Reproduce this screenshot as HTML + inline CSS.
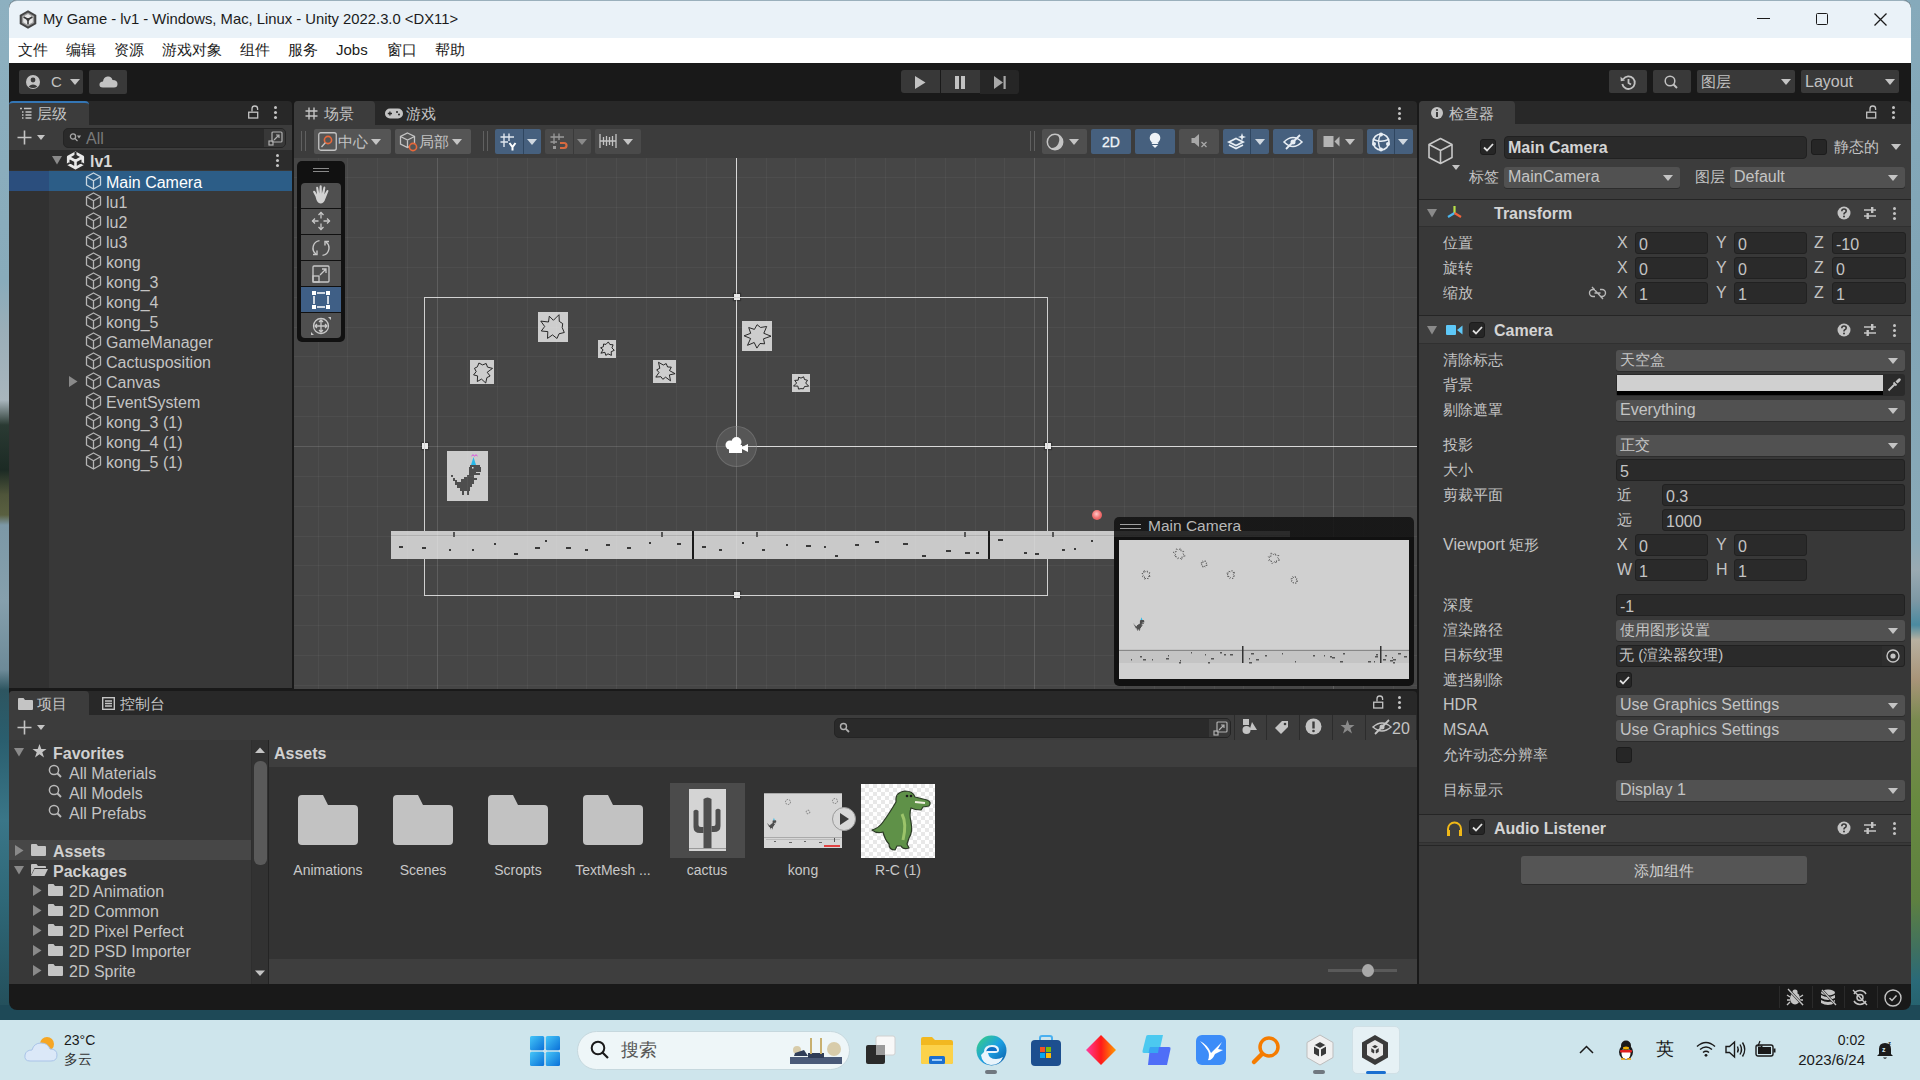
<!DOCTYPE html>
<html><head><meta charset="utf-8">
<style>
*{margin:0;padding:0;box-sizing:border-box}
html,body{width:1920px;height:1080px;overflow:hidden}
body{position:relative;font-family:"Liberation Sans",sans-serif;font-size:15px;color:#c4c4c4;
background:#1e4957}
.a{position:absolute}
.t{position:absolute;white-space:nowrap;line-height:20px}
svg{position:absolute;overflow:visible}
.btn{position:absolute;background:#383838;border-radius:2px}
.fld{position:absolute;background:#2a2a2a;border:1px solid #212121;border-radius:3px}
.dd{position:absolute;background:#515151;border-radius:3px;box-shadow:0 1px 0 #2c2c2c}
.tri{position:absolute;width:0;height:0;border-left:5px solid transparent;border-right:5px solid transparent;border-top:6px solid #c4c4c4}
.ico{position:absolute}
</style></head><body>
<!-- wallpaper right side -->
<div class="a" style="left:0;top:0;width:20px;height:1020px;background:linear-gradient(180deg,#8db0c0 0px,#88abbb 280px,#9aaeb8 330px,#a9b6bd 400px,#2a3a33 425px,#1c2a24 470px,#4f553a 495px,#5a6040 515px,#7c98a6 525px,#86a0ad 600px,#6d8a98 670px,#2d5560 690px,#2a5e6e 740px,#3a7688 820px,#2f6878 900px,#24505c 1005px,#1e4957 1020px)"></div><div class="a" style="left:1900px;top:0;width:20px;height:1020px;background:linear-gradient(180deg,#86aabb 0px,#80a4b5 300px,#8aaab8 540px,#9aaab2 570px,#7e98a4 600px,#4a8aa0 625px,#b8b0a0 640px,#a89478 680px,#7a8a50 720px,#688a40 800px,#5e8040 900px,#3f7060 950px,#2a6a78 980px,#245e6a 1020px)"></div>
<div class="a" style="left:0;top:1005px;width:1920px;height:15px;background:#1e4957"></div>

<!-- window base -->
<div class="a" style="left:9px;top:0;width:1902px;height:1010px;background:#191919;border-radius:8px"></div>
<!-- title bar -->
<div class="a" style="left:9px;top:0;width:1902px;height:38px;background:#eaf2f8;border-radius:8px 8px 0 0;border-top:1px solid #9ab0bc"></div>
<div class="t" style="left:43px;top:9px;font-size:14.8px;color:#1b1b1b">My Game - lv1 - Windows, Mac, Linux - Unity 2022.3.0 &lt;DX11&gt;</div>
<svg style="left:19px;top:10px" width="18" height="19" viewBox="0 0 18 19"><path d="M9 0.3 L17.3 5 V14 L9 18.7 L0.7 14 V5Z" fill="#444"/><path d="M9 2.5 L15.2 6.1 V12.9 L9 16.5 L2.8 12.9 V6.1Z" fill="#9a9a9a"/><path d="M9 4 L13.8 6.8 V12.2 L9 15 L4.2 12.2 V6.8Z" fill="#e8e8e8"/><path d="M9 9.5 V14.5 M9 9.5 L4.6 7 M9 9.5 L13.4 7" stroke="#3a3a3a" stroke-width="1.6"/><circle cx="9" cy="9.5" r="1.5" fill="#3a3a3a"/></svg>
<!-- window controls -->
<div class="a" style="left:1757px;top:18px;width:13px;height:1.3px;background:#1b1b1b"></div>
<div class="a" style="left:1816px;top:13px;width:12px;height:12px;border:1.3px solid #1b1b1b;border-radius:1.5px"></div>
<svg style="left:1874px;top:13px" width="13" height="13"><path d="M0.5 0.5 L12.5 12.5 M12.5 0.5 L0.5 12.5" stroke="#1b1b1b" stroke-width="1.3"/></svg>
<!-- menu bar -->
<div class="a" style="left:9px;top:38px;width:1902px;height:25px;background:#ffffff"></div>
<div class="t" style="left:18px;top:40px;font-size:15px;color:#1b1b1b">文件</div>
<div class="t" style="left:66px;top:40px;font-size:15px;color:#1b1b1b">编辑</div>
<div class="t" style="left:114px;top:40px;font-size:15px;color:#1b1b1b">资源</div>
<div class="t" style="left:162px;top:40px;font-size:15px;color:#1b1b1b">游戏对象</div>
<div class="t" style="left:240px;top:40px;font-size:15px;color:#1b1b1b">组件</div>
<div class="t" style="left:288px;top:40px;font-size:15px;color:#1b1b1b">服务</div>
<div class="t" style="left:336px;top:40px;font-size:15px;color:#1b1b1b">Jobs</div>
<div class="t" style="left:387px;top:40px;font-size:15px;color:#1b1b1b">窗口</div>
<div class="t" style="left:435px;top:40px;font-size:15px;color:#1b1b1b">帮助</div>
<!-- main toolbar -->
<div class="btn" style="left:19px;top:70px;width:64px;height:24px;background:#393939"></div>
<svg style="left:26px;top:75px" width="14" height="14"><circle cx="7" cy="7" r="7" fill="#c2c2c2"/><circle cx="7" cy="5" r="2.4" fill="#393939"/><path d="M2.6 11.4 Q7 7.5 11.4 11.4 Q7 14.5 2.6 11.4Z" fill="#393939"/></svg>
<div class="t" style="left:51px;top:72px;font-size:15px;color:#c2c2c2">C</div>
<div class="tri" style="left:70px;top:79px"></div>
<div class="btn" style="left:89px;top:70px;width:38px;height:24px;background:#393939"></div>
<svg style="left:99px;top:75px" width="19" height="13" viewBox="0 0 19 13"><path d="M4 12.5 Q0 12.5 0.5 9 Q1 6.5 4 6.5 Q4.5 2 8.5 1.5 Q12.5 1 13.5 5 Q18.5 5 18.5 9 Q18.5 12.5 15 12.5Z" fill="#c2c2c2"/></svg>
<div class="btn" style="left:901px;top:70px;width:39px;height:23px;background:#383838;border-radius:3px 0 0 3px"></div>
<div class="btn" style="left:941px;top:70px;width:39px;height:23px;background:#383838;border-radius:0"></div>
<div class="btn" style="left:980px;top:70px;width:39px;height:24px;background:#262626;border-radius:0 3px 3px 0"></div>
<svg style="left:915px;top:76px" width="11" height="13"><path d="M0 0 L10.5 6.5 L0 13Z" fill="#c2c2c2"/></svg>
<div class="a" style="left:955px;top:76px;width:4px;height:13px;background:#c2c2c2"></div>
<div class="a" style="left:961px;top:76px;width:4px;height:13px;background:#c2c2c2"></div>
<svg style="left:994px;top:76px" width="12" height="13"><path d="M0 0 L9 6.5 L0 13Z" fill="#a8a8a8"/><rect x="9.5" y="0" width="2.2" height="13" fill="#a8a8a8"/></svg>
<div class="btn" style="left:1609px;top:70px;width:38px;height:23px;background:#393939"></div>
<svg style="left:1620px;top:75px" width="16" height="15" viewBox="0 0 16 15"><path d="M3.2 4.2 A6.3 6.3 0 1 1 2.3 9" fill="none" stroke="#c2c2c2" stroke-width="1.8"/><path d="M0.5 1.8 L0.8 6.2 L5 5.6Z" fill="#c2c2c2"/><path d="M8.5 4 V8 L11 9.5" fill="none" stroke="#c2c2c2" stroke-width="1.8"/></svg>
<div class="btn" style="left:1653px;top:70px;width:38px;height:23px;background:#393939"></div>
<svg style="left:1664px;top:75px" width="16" height="15"><circle cx="6" cy="6" r="4.8" fill="none" stroke="#c2c2c2" stroke-width="1.5"/><path d="M9.5 9.5 L13 13" stroke="#c2c2c2" stroke-width="2"/></svg>
<div class="btn" style="left:1697px;top:70px;width:98px;height:23px;background:#393939"></div>
<div class="t" style="left:1701px;top:72px;font-size:15px;color:#c2c2c2">图层</div>
<div class="tri" style="left:1781px;top:79px"></div>
<div class="btn" style="left:1801px;top:70px;width:98px;height:23px;background:#393939"></div>
<div class="t" style="left:1805px;top:72px;font-size:16px;color:#c2c2c2">Layout</div>
<div class="tri" style="left:1885px;top:79px"></div>

<!-- HIERARCHY -->
<div class="a" style="left:9px;top:101px;width:283px;height:24px;background:#282828;border-radius:4px 4px 0 0"></div>
<div class="a" style="left:9px;top:125px;width:283px;height:25px;background:#3c3c3c"></div>
<div class="a" style="left:9px;top:150px;width:283px;height:538px;background:#383838"></div>

<!-- hierarchy tab -->
<div class="a" style="left:9px;top:101px;width:80px;height:24px;background:#3c3c3c;border-radius:4px 4px 0 0;border-top:2px solid #3476b5"></div>
<svg style="left:19px;top:107px" width="13" height="12"><path d="M1 1.5 H3 M5 1.5 H12.5 M3 5 H4.5 M6.5 5 H12.5 M3 8 H4.5 M6.5 8 H12.5 M3 11 H4.5 M6.5 11 H12.5" stroke="#c4c4c4" stroke-width="1.4"/></svg>
<div class="t" style="left:37px;top:104px;font-size:15px">层级</div>
<svg style="left:248px;top:105px" width="12" height="14"><path d="M4 6.5 V3.8 A2.8 2.8 0 0 1 9.6 3.8 V5" fill="none" stroke="#c4c4c4" stroke-width="1.3"/><rect x="0.7" y="7.2" width="9" height="5.8" fill="none" stroke="#c4c4c4" stroke-width="1.3"/></svg>
<div class="a" style="left:274px;top:106px;width:3px;height:3px;border-radius:2px;background:#c4c4c4;box-shadow:0 5px 0 #c4c4c4,0 10px 0 #c4c4c4"></div>
<!-- hierarchy toolbar -->
<svg style="left:17px;top:130px" width="15" height="15"><path d="M7.5 0.5 V14.5 M0.5 7.5 H14.5" stroke="#c4c4c4" stroke-width="1.6"/></svg>
<div class="tri" style="left:37px;top:135px;border-left-width:4.5px;border-right-width:4.5px;border-top-width:5px"></div>
<div class="fld" style="left:63px;top:128px;width:223px;height:20px;border-radius:5px;background:#2a2a2a;border-color:#242424"></div>
<div class="a" style="left:264px;top:129px;width:21px;height:18px;background:#383838;border-radius:0 4px 4px 0"></div>
<svg style="left:69px;top:132px" width="12" height="11"><circle cx="4" cy="4.5" r="2.6" fill="none" stroke="#a8a8a8" stroke-width="1.3"/><path d="M6 6.5 L8.5 9 M9 4 L11 4 L10 5.5Z" stroke="#a8a8a8" stroke-width="1.2" fill="#a8a8a8"/></svg>
<div class="t" style="left:86px;top:129px;font-size:16px;color:#7a7a7a">All</div>
<svg style="left:268px;top:131px" width="15" height="15"><rect x="4" y="1" width="10" height="10" rx="1" fill="none" stroke="#b0b0b0" stroke-width="1.2"/><rect x="1" y="10" width="4" height="4" fill="none" stroke="#b0b0b0" stroke-width="1.2"/><path d="M6 9 L11 4 M8 4 H11 V7" fill="none" stroke="#b0b0b0" stroke-width="1.2"/></svg>
<!-- left strip -->
<div class="a" style="left:9px;top:150px;width:40px;height:538px;background:#313131"></div>
<!-- lv1 row -->
<div class="a" style="left:9px;top:150px;width:283px;height:20px;background:#2c2c2c"></div>
<svg style="left:52px;top:156px" width="11" height="9"><path d="M0 0 H10 L5 8.5Z" fill="#8a8a8a"/></svg>
<svg style="left:67px;top:152px" width="17" height="17" viewBox="0 0 17 17"><path d="M8.5 0.8 L15.8 5 V12 L8.5 16.2 L1.2 12 V5Z M1.2 5 L8.5 9 L15.8 5 M8.5 9 V16.2" fill="none" stroke="#e8e8e8" stroke-width="2.6" stroke-linejoin="round"/><path d="M8.5 0 V3 M0 12.5 L2.6 11 M17 12.5 L14.4 11" stroke="#2c2c2c" stroke-width="2"/></svg>
<div class="t" style="left:90px;top:152px;font-size:16px;font-weight:bold;color:#d8d8d8">lv1</div>
<div class="a" style="left:276px;top:154px;width:3px;height:3px;border-radius:2px;background:#c4c4c4;box-shadow:0 5px 0 #c4c4c4,0 10px 0 #c4c4c4"></div>
<!-- selected row -->
<div class="a" style="left:9px;top:171px;width:40px;height:20px;background:#2b4e7d"></div>
<div class="a" style="left:49px;top:171px;width:243px;height:20px;background:#2c5d87"></div>

<svg style="left:85px;top:172px" width="17" height="18" viewBox="0 0 17 18"><path d="M8.5 1 L15.5 4.8 L15.5 13 L8.5 17 L1.5 13 L1.5 4.8 Z M1.5 4.8 L8.5 8.8 L15.5 4.8 M8.5 8.8 V17" fill="none" stroke="#c8d6e0" stroke-width="1.3" stroke-linejoin="round"/></svg>
<div class="t" style="left:106px;top:173px;font-size:16px;color:#ffffff">Main Camera</div>
<svg style="left:85px;top:192px" width="17" height="18" viewBox="0 0 17 18"><path d="M8.5 1 L15.5 4.8 L15.5 13 L8.5 17 L1.5 13 L1.5 4.8 Z M1.5 4.8 L8.5 8.8 L15.5 4.8 M8.5 8.8 V17" fill="none" stroke="#b4b4b4" stroke-width="1.3" stroke-linejoin="round"/></svg>
<div class="t" style="left:106px;top:193px;font-size:16px;color:#c4c4c4">lu1</div>
<svg style="left:85px;top:212px" width="17" height="18" viewBox="0 0 17 18"><path d="M8.5 1 L15.5 4.8 L15.5 13 L8.5 17 L1.5 13 L1.5 4.8 Z M1.5 4.8 L8.5 8.8 L15.5 4.8 M8.5 8.8 V17" fill="none" stroke="#b4b4b4" stroke-width="1.3" stroke-linejoin="round"/></svg>
<div class="t" style="left:106px;top:213px;font-size:16px;color:#c4c4c4">lu2</div>
<svg style="left:85px;top:232px" width="17" height="18" viewBox="0 0 17 18"><path d="M8.5 1 L15.5 4.8 L15.5 13 L8.5 17 L1.5 13 L1.5 4.8 Z M1.5 4.8 L8.5 8.8 L15.5 4.8 M8.5 8.8 V17" fill="none" stroke="#b4b4b4" stroke-width="1.3" stroke-linejoin="round"/></svg>
<div class="t" style="left:106px;top:233px;font-size:16px;color:#c4c4c4">lu3</div>
<svg style="left:85px;top:252px" width="17" height="18" viewBox="0 0 17 18"><path d="M8.5 1 L15.5 4.8 L15.5 13 L8.5 17 L1.5 13 L1.5 4.8 Z M1.5 4.8 L8.5 8.8 L15.5 4.8 M8.5 8.8 V17" fill="none" stroke="#b4b4b4" stroke-width="1.3" stroke-linejoin="round"/></svg>
<div class="t" style="left:106px;top:253px;font-size:16px;color:#c4c4c4">kong</div>
<svg style="left:85px;top:272px" width="17" height="18" viewBox="0 0 17 18"><path d="M8.5 1 L15.5 4.8 L15.5 13 L8.5 17 L1.5 13 L1.5 4.8 Z M1.5 4.8 L8.5 8.8 L15.5 4.8 M8.5 8.8 V17" fill="none" stroke="#b4b4b4" stroke-width="1.3" stroke-linejoin="round"/></svg>
<div class="t" style="left:106px;top:273px;font-size:16px;color:#c4c4c4">kong_3</div>
<svg style="left:85px;top:292px" width="17" height="18" viewBox="0 0 17 18"><path d="M8.5 1 L15.5 4.8 L15.5 13 L8.5 17 L1.5 13 L1.5 4.8 Z M1.5 4.8 L8.5 8.8 L15.5 4.8 M8.5 8.8 V17" fill="none" stroke="#b4b4b4" stroke-width="1.3" stroke-linejoin="round"/></svg>
<div class="t" style="left:106px;top:293px;font-size:16px;color:#c4c4c4">kong_4</div>
<svg style="left:85px;top:312px" width="17" height="18" viewBox="0 0 17 18"><path d="M8.5 1 L15.5 4.8 L15.5 13 L8.5 17 L1.5 13 L1.5 4.8 Z M1.5 4.8 L8.5 8.8 L15.5 4.8 M8.5 8.8 V17" fill="none" stroke="#b4b4b4" stroke-width="1.3" stroke-linejoin="round"/></svg>
<div class="t" style="left:106px;top:313px;font-size:16px;color:#c4c4c4">kong_5</div>
<svg style="left:85px;top:332px" width="17" height="18" viewBox="0 0 17 18"><path d="M8.5 1 L15.5 4.8 L15.5 13 L8.5 17 L1.5 13 L1.5 4.8 Z M1.5 4.8 L8.5 8.8 L15.5 4.8 M8.5 8.8 V17" fill="none" stroke="#b4b4b4" stroke-width="1.3" stroke-linejoin="round"/></svg>
<div class="t" style="left:106px;top:333px;font-size:16px;color:#c4c4c4">GameManager</div>
<svg style="left:85px;top:352px" width="17" height="18" viewBox="0 0 17 18"><path d="M8.5 1 L15.5 4.8 L15.5 13 L8.5 17 L1.5 13 L1.5 4.8 Z M1.5 4.8 L8.5 8.8 L15.5 4.8 M8.5 8.8 V17" fill="none" stroke="#b4b4b4" stroke-width="1.3" stroke-linejoin="round"/></svg>
<div class="t" style="left:106px;top:353px;font-size:16px;color:#c4c4c4">Cactusposition</div>
<svg style="left:85px;top:372px" width="17" height="18" viewBox="0 0 17 18"><path d="M8.5 1 L15.5 4.8 L15.5 13 L8.5 17 L1.5 13 L1.5 4.8 Z M1.5 4.8 L8.5 8.8 L15.5 4.8 M8.5 8.8 V17" fill="none" stroke="#b4b4b4" stroke-width="1.3" stroke-linejoin="round"/></svg>
<div class="t" style="left:106px;top:373px;font-size:16px;color:#c4c4c4">Canvas</div>
<svg style="left:85px;top:392px" width="17" height="18" viewBox="0 0 17 18"><path d="M8.5 1 L15.5 4.8 L15.5 13 L8.5 17 L1.5 13 L1.5 4.8 Z M1.5 4.8 L8.5 8.8 L15.5 4.8 M8.5 8.8 V17" fill="none" stroke="#b4b4b4" stroke-width="1.3" stroke-linejoin="round"/></svg>
<div class="t" style="left:106px;top:393px;font-size:16px;color:#c4c4c4">EventSystem</div>
<svg style="left:85px;top:412px" width="17" height="18" viewBox="0 0 17 18"><path d="M8.5 1 L15.5 4.8 L15.5 13 L8.5 17 L1.5 13 L1.5 4.8 Z M1.5 4.8 L8.5 8.8 L15.5 4.8 M8.5 8.8 V17" fill="none" stroke="#b4b4b4" stroke-width="1.3" stroke-linejoin="round"/></svg>
<div class="t" style="left:106px;top:413px;font-size:16px;color:#c4c4c4">kong_3 (1)</div>
<svg style="left:85px;top:432px" width="17" height="18" viewBox="0 0 17 18"><path d="M8.5 1 L15.5 4.8 L15.5 13 L8.5 17 L1.5 13 L1.5 4.8 Z M1.5 4.8 L8.5 8.8 L15.5 4.8 M8.5 8.8 V17" fill="none" stroke="#b4b4b4" stroke-width="1.3" stroke-linejoin="round"/></svg>
<div class="t" style="left:106px;top:433px;font-size:16px;color:#c4c4c4">kong_4 (1)</div>
<svg style="left:85px;top:452px" width="17" height="18" viewBox="0 0 17 18"><path d="M8.5 1 L15.5 4.8 L15.5 13 L8.5 17 L1.5 13 L1.5 4.8 Z M1.5 4.8 L8.5 8.8 L15.5 4.8 M8.5 8.8 V17" fill="none" stroke="#b4b4b4" stroke-width="1.3" stroke-linejoin="round"/></svg>
<div class="t" style="left:106px;top:453px;font-size:16px;color:#c4c4c4">kong_5 (1)</div>
<svg style="left:69px;top:376px" width="9" height="11"><path d="M0 0 L8.5 5.5 L0 11Z" fill="#8a8a8a"/></svg>
<!-- SCENE -->
<div class="a" style="left:294px;top:101px;width:1123px;height:24px;background:#282828;border-radius:4px 4px 0 0"></div>
<div class="a" style="left:294px;top:125px;width:1123px;height:33px;background:#3c3c3c"></div>
<div class="a" style="left:294px;top:158px;width:1123px;height:531px;background:#464646"></div>

<!-- scene tabs -->
<div class="a" style="left:294px;top:101px;width:81px;height:24px;background:#3c3c3c;border-radius:4px 4px 0 0"></div>
<svg style="left:305px;top:107px" width="13" height="13"><path d="M4 0.5 V12.5 M9 0.5 V12.5 M0.5 4 H12.5 M0.5 9 H12.5" stroke="#c4c4c4" stroke-width="1.4"/></svg>
<div class="t" style="left:324px;top:104px;font-size:15px">场景</div>
<svg style="left:385px;top:108px" width="18" height="11" viewBox="0 0 18 11"><path d="M5 0.5 H13 A4.5 4.5 0 0 1 13 10.5 H5 A4.5 4.5 0 0 1 5 0.5Z" fill="#c4c4c4"/><path d="M2.8 5.5 H7 M4.9 3.4 V7.6" stroke="#282828" stroke-width="1.3"/><circle cx="12" cy="4" r="1" fill="#282828"/><circle cx="14" cy="6.5" r="1" fill="#282828"/></svg>
<div class="t" style="left:406px;top:104px;font-size:15px">游戏</div>
<div class="a" style="left:1398px;top:107px;width:3px;height:3px;border-radius:2px;background:#c4c4c4;box-shadow:0 5px 0 #c4c4c4,0 10px 0 #c4c4c4"></div>
<!-- scene toolbar -->
<div class="a" style="left:301px;top:131px;width:1px;height:20px;background:#606060;box-shadow:4px 0 0 #606060"></div>
<div class="btn" style="left:314px;top:129px;width:77px;height:25px;background:#555555"></div>
<svg style="left:318px;top:132px" width="19" height="19"><rect x="0.75" y="0.75" width="17.5" height="17.5" rx="2" fill="none" stroke="#c4c4c4" stroke-width="1.3"/><circle cx="10" cy="8" r="3.6" fill="none" stroke="#e8683a" stroke-width="1.6"/><path d="M3.5 15 L7.3 10.8" stroke="#c4c4c4" stroke-width="1.3"/></svg>
<div class="t" style="left:338px;top:132px;font-size:15px">中心</div>
<div class="tri" style="left:371px;top:139px"></div>
<div class="btn" style="left:395px;top:129px;width:76px;height:25px;background:#555555"></div>
<svg style="left:399px;top:132px" width="20" height="20" viewBox="0 0 20 20"><path d="M8.5 1 L15.5 4.5 V12 L8.5 15.5 L1.5 12 V4.5Z M1.5 4.5 L8.5 8 L15.5 4.5 M8.5 8 V15.5" fill="none" stroke="#c4c4c4" stroke-width="1.3"/><circle cx="14" cy="15" r="3.6" fill="#555" stroke="#e8683a" stroke-width="1.6"/></svg>
<div class="t" style="left:419px;top:132px;font-size:15px">局部</div>
<div class="tri" style="left:452px;top:139px"></div>
<div class="a" style="left:483px;top:131px;width:1px;height:20px;background:#606060;box-shadow:4px 0 0 #606060"></div>
<div class="btn" style="left:495px;top:129px;width:46px;height:25px;background:#46607e"></div>
<div class="a" style="left:523px;top:129px;width:1px;height:25px;background:#2f4660"></div>
<svg style="left:500px;top:133px" width="18" height="18" viewBox="0 0 18 18"><path d="M4 0.5 V14 M9 0.5 V8 M0.5 4 H14 M0.5 9 H8" stroke="#dfe6ee" stroke-width="1.4"/><path d="M9.5 10 L12.5 14 L15.5 10 M12.5 14 V17.5" fill="none" stroke="#ffffff" stroke-width="2"/></svg>
<div class="tri" style="left:527px;top:139px;border-top-color:#d0d8e0"></div>
<div class="btn" style="left:545px;top:129px;width:46px;height:25px;background:#4a4a4a"></div>
<div class="a" style="left:573px;top:129px;width:1px;height:25px;background:#3a3a3a"></div>
<svg style="left:550px;top:133px" width="18" height="18" viewBox="0 0 18 18"><path d="M4 0.5 V11 M9 0.5 V7 M0.5 4 H14 M0.5 9 H7" stroke="#9a9a9a" stroke-width="1.3"/><path d="M10 10 H14 A2.5 2.5 0 0 1 14 15 H10" fill="none" stroke="#d86a40" stroke-width="2.2"/><rect x="3" y="13" width="3" height="3" fill="#9a9a9a"/></svg>
<div class="tri" style="left:577px;top:139px;border-top-color:#8a8a8a"></div>
<div class="btn" style="left:595px;top:129px;width:46px;height:25px;background:#4a4a4a"></div>
<svg style="left:599px;top:133px" width="18" height="16" viewBox="0 0 18 16"><path d="M1 1 V15 M17 1 V15 M1 8 H17 M4.5 4 V12 M7.5 3 V13 M10.5 4 V12 M13.5 3 V13" stroke="#c4c4c4" stroke-width="1.3"/></svg>
<div class="tri" style="left:623px;top:139px"></div>
<div class="a" style="left:1030px;top:131px;width:1px;height:20px;background:#606060;box-shadow:4px 0 0 #606060"></div>
<div class="btn" style="left:1042px;top:129px;width:45px;height:25px;background:#4f4f4f"></div>
<svg style="left:1046px;top:133px" width="18" height="18" viewBox="0 0 18 18"><circle cx="9" cy="9" r="7.7" fill="none" stroke="#c4c4c4" stroke-width="1.5"/><path d="M11 1.6 A7.7 7.7 0 0 1 9 16.7 A7.7 7.7 0 0 1 4 15 A8 8 0 0 0 11 1.6Z" fill="#c4c4c4"/></svg>
<div class="tri" style="left:1069px;top:139px"></div>
<div class="btn" style="left:1091px;top:129px;width:40px;height:25px;background:#46607e"></div>
<div class="t" style="left:1102px;top:132px;font-size:14px;color:#f0f4f8;-webkit-text-stroke:0.3px #f0f4f8">2D</div>
<div class="btn" style="left:1135px;top:129px;width:40px;height:25px;background:#46607e"></div>
<svg style="left:1149px;top:132px" width="12" height="18" viewBox="0 0 12 18"><circle cx="6" cy="6" r="5.3" fill="#eef2f6"/><path d="M2.5 10.5 H9.5 L9 12 H3Z" fill="#eef2f6"/><path d="M3 13 H9 L6 16Z" fill="#eef2f6"/></svg>
<div class="btn" style="left:1179px;top:129px;width:40px;height:25px;background:#4f4f4f"></div>
<svg style="left:1191px;top:133px" width="18" height="16" viewBox="0 0 18 16"><path d="M0.5 5 H3.5 L8 1 V14 L3.5 10 H0.5Z" fill="#a8a8a8"/><path d="M10.5 9 L15.5 14 M15.5 9 L10.5 14" stroke="#a8a8a8" stroke-width="1.3"/></svg>
<div class="btn" style="left:1223px;top:129px;width:46px;height:25px;background:#46607e"></div>
<div class="a" style="left:1250px;top:129px;width:1px;height:25px;background:#2f4660"></div>
<svg style="left:1228px;top:132px" width="20" height="19" viewBox="0 0 20 19"><path d="M1 10 L8 6.5 L15 10 L8 13.5Z M1 13 L8 16.5 L15 13" fill="none" stroke="#e8eef4" stroke-width="1.8"/><path d="M14 1 L15 4 L18 5 L15 6 L14 9 L13 6 L10 5 L13 4Z" fill="#e8eef4"/></svg>
<div class="tri" style="left:1255px;top:139px;border-top-color:#d0d8e0"></div>
<div class="btn" style="left:1273px;top:129px;width:40px;height:25px;background:#46607e"></div>
<svg style="left:1283px;top:134px" width="20" height="16" viewBox="0 0 20 16"><path d="M1 8 Q10 -1 19 8 Q10 17 1 8Z" fill="none" stroke="#e8eef4" stroke-width="1.6"/><circle cx="10" cy="8" r="2.5" fill="#e8eef4"/><path d="M3 15 L17 1" stroke="#e8eef4" stroke-width="1.8"/></svg>
<div class="btn" style="left:1317px;top:129px;width:46px;height:25px;background:#4f4f4f"></div>
<svg style="left:1323px;top:135px" width="18" height="13" viewBox="0 0 18 13"><rect x="0.5" y="1" width="10" height="11" fill="#b4b4b4"/><path d="M11.5 6.5 L16.5 1.5 V11.5Z" fill="#b4b4b4"/></svg>
<div class="tri" style="left:1345px;top:139px"></div>
<div class="btn" style="left:1367px;top:129px;width:46px;height:25px;background:#46607e"></div>
<div a class="a" style="left:1394px;top:129px;width:1px;height:25px;background:#2f4660"></div>
<svg style="left:1371px;top:132px" width="20" height="20" viewBox="0 0 20 20"><circle cx="10" cy="10" r="8" fill="none" stroke="#e8eef4" stroke-width="1.6"/><path d="M10 2 Q5 10 10 18 M2.5 7.5 Q10 11 17.5 7.5" fill="none" stroke="#e8eef4" stroke-width="1.4"/><circle cx="10" cy="2.5" r="2" fill="#e8eef4"/><circle cx="3" cy="12" r="2" fill="#e8eef4"/><circle cx="17" cy="12" r="2" fill="#e8eef4"/><circle cx="10" cy="17.5" r="2" fill="#e8eef4"/></svg>
<div class="tri" style="left:1398px;top:139px;border-top-color:#d0d8e0"></div>


<!-- scene objects -->
<div class="a" style="left:736px;top:158px;width:1px;height:288px;background:#d4d4d4"></div>
<div class="a" style="left:736px;top:446px;width:681px;height:1px;background:#d4d4d4"></div><div class="a" style="left:734px;top:294px;width:6px;height:6px;background:#e8e8e8;box-shadow:0 0 1px 1px rgba(0,0,0,0.25)"></div><div class="a" style="left:422px;top:443px;width:6px;height:6px;background:#e8e8e8;box-shadow:0 0 1px 1px rgba(0,0,0,0.25)"></div><div class="a" style="left:1045px;top:443px;width:6px;height:6px;background:#e8e8e8;box-shadow:0 0 1px 1px rgba(0,0,0,0.25)"></div><div class="a" style="left:734px;top:592px;width:6px;height:6px;background:#e8e8e8;box-shadow:0 0 1px 1px rgba(0,0,0,0.25)"></div>
<div class="a" style="left:424px;top:297px;width:624px;height:299px;border:1px solid #d0d0d0"></div>




<svg style="left:538px;top:312px" width="30" height="30"><rect width="30" height="30" fill="#cdcdcd"/><path d="M26.3,20.5 L21.0,21.8 L19.0,26.5 L14.5,22.9 L9.5,26.4 L9.8,19.6 L3.3,19.0 L6.7,14.5 L2.8,9.1 L10.5,10.0 L11.3,4.2 L15.4,8.3 L21.0,2.7 L21.3,9.4 L24.7,11.6 L24.2,15.6Z" fill="none" stroke="#151515" stroke-width="0.9"/></svg>
<svg style="left:598px;top:340px" width="18" height="18"><rect width="18" height="18" fill="#cdcdcd"/><path d="M13.4,15.4 L10.0,13.8 L7.8,15.4 L6.9,12.3 L2.9,13.2 L5.1,9.8 L2.6,7.8 L5.4,6.7 L5.5,4.0 L8.0,4.4 L10.3,1.9 L11.9,4.5 L15.1,4.8 L13.9,7.9 L16.3,10.3 L13.2,11.7Z" fill="none" stroke="#151515" stroke-width="0.9"/></svg>
<svg style="left:470px;top:360px" width="24" height="24"><rect width="24" height="24" fill="#cdcdcd"/><path d="M20.1,16.0 L16.9,17.6 L15.7,23.0 L11.5,19.1 L7.3,21.5 L7.6,15.9 L3.6,14.9 L6.2,11.6 L4.5,8.3 L7.4,6.8 L8.9,3.0 L12.5,4.9 L16.2,3.5 L17.5,7.1 L22.5,8.4 L17.2,12.3Z" fill="none" stroke="#151515" stroke-width="0.9"/></svg>
<svg style="left:653px;top:360px" width="23" height="23"><rect width="23" height="23" fill="#cdcdcd"/><path d="M22.1,13.7 L16.4,14.9 L17.5,20.8 L12.6,17.2 L9.8,19.3 L7.9,16.7 L2.8,17.1 L6.0,12.5 L3.7,9.8 L6.8,8.3 L5.5,2.3 L10.3,5.0 L13.2,3.6 L14.6,7.0 L18.3,7.1 L16.5,10.6Z" fill="none" stroke="#151515" stroke-width="0.9"/></svg>
<svg style="left:742px;top:321px" width="30" height="30"><rect width="30" height="30" fill="#cdcdcd"/><path d="M22.6,22.8 L18.0,22.5 L14.9,27.1 L12.2,21.5 L5.5,24.3 L8.6,17.5 L2.1,14.8 L8.7,12.3 L6.7,6.5 L12.4,8.4 L15.1,3.7 L18.6,6.5 L24.7,5.5 L21.8,12.3 L29.0,15.2 L21.5,17.8Z" fill="none" stroke="#151515" stroke-width="0.9"/></svg>
<svg style="left:792px;top:374px" width="18" height="18"><rect width="18" height="18" fill="#cdcdcd"/><path d="M16.7,12.2 L12.5,12.5 L11.4,14.8 L9.0,14.6 L6.5,15.1 L5.9,12.1 L1.5,12.1 L4.6,9.0 L2.7,6.4 L6.2,6.2 L6.6,3.2 L9.0,4.1 L11.6,2.8 L12.5,5.5 L15.5,6.3 L13.7,9.0Z" fill="none" stroke="#151515" stroke-width="0.9"/></svg>
<svg style="left:447px;top:451px" width="41" height="50" viewBox="0 0 41 50"><rect width="41" height="50" fill="#cccccc"/>
<path d="M23 14 H33 V16 H34 V21 H29 V22 H33 V24 H27 V27 H30 V29 H27 V33 H25 V36 H23 V40 H22 V44 H20 V40 H17 V44 H15 V40 H13 V37 H10 V34 H8 V30 H6 V26 H4 V24 H6 V27 H8 V29 H10 V31 H14 V28 H17 V26 H20 V24 H22 V16 H23Z" fill="#4e4e4e"/>
<rect x="25" y="16" width="1.5" height="1.5" fill="#ddd"/>
<path d="M24 14 L26.5 6 L29 14Z" fill="#28b8e8"/><path d="M24.5 5 Q26 2.5 27.5 5 Q29 2.5 30.5 5" fill="none" stroke="#e040e0" stroke-width="1"/></svg>
<div class="a" style="left:391px;top:531px;width:301px;height:28px;background:#c9c9c9"></div>
<div class="a" style="left:391px;top:535px;width:301px;height:1px;background:#b0b0b0"></div>
<div class="a" style="left:694px;top:531px;width:294px;height:28px;background:#c9c9c9"></div>
<div class="a" style="left:694px;top:535px;width:294px;height:1px;background:#b0b0b0"></div>
<div class="a" style="left:990px;top:531px;width:124px;height:28px;background:#c9c9c9"></div>
<div class="a" style="left:990px;top:535px;width:124px;height:1px;background:#b0b0b0"></div>
<svg style="left:391px;top:531px" width="723" height="28"><rect x="8" y="15" width="4" height="2" fill="#3a3a3a"/><rect x="31" y="16" width="4" height="2" fill="#3a3a3a"/><rect x="58" y="18" width="2" height="2" fill="#3a3a3a"/><rect x="81" y="18" width="2" height="2" fill="#3a3a3a"/><rect x="103" y="12" width="2" height="2" fill="#3a3a3a"/><rect x="123" y="22" width="4" height="2" fill="#3a3a3a"/><rect x="144" y="16" width="5" height="2" fill="#3a3a3a"/><rect x="154" y="9" width="2" height="2" fill="#3a3a3a"/><rect x="175" y="16" width="5" height="2" fill="#3a3a3a"/><rect x="194" y="18" width="3" height="2" fill="#3a3a3a"/><rect x="215" y="13" width="4" height="2" fill="#3a3a3a"/><rect x="236" y="16" width="4" height="2" fill="#3a3a3a"/><rect x="258" y="11" width="2" height="2" fill="#3a3a3a"/><rect x="286" y="12" width="4" height="2" fill="#3a3a3a"/><rect x="62" y="1" width="2" height="5" fill="#555"/><rect x="270" y="1" width="2" height="5" fill="#555"/><rect x="311" y="15" width="4" height="2" fill="#3a3a3a"/><rect x="328" y="18" width="3" height="2" fill="#3a3a3a"/><rect x="351" y="11" width="2" height="2" fill="#3a3a3a"/><rect x="371" y="18" width="3" height="2" fill="#3a3a3a"/><rect x="395" y="13" width="2" height="2" fill="#3a3a3a"/><rect x="415" y="14" width="5" height="2" fill="#3a3a3a"/><rect x="433" y="15" width="2" height="2" fill="#3a3a3a"/><rect x="444" y="24" width="3" height="2" fill="#3a3a3a"/><rect x="464" y="13" width="4" height="2" fill="#3a3a3a"/><rect x="484" y="10" width="4" height="2" fill="#3a3a3a"/><rect x="512" y="12" width="5" height="2" fill="#3a3a3a"/><rect x="531" y="24" width="4" height="2" fill="#3a3a3a"/><rect x="555" y="19" width="5" height="2" fill="#3a3a3a"/><rect x="574" y="21" width="5" height="2" fill="#3a3a3a"/><rect x="585" y="21" width="3" height="2" fill="#3a3a3a"/><rect x="365" y="1" width="2" height="5" fill="#555"/><rect x="573" y="1" width="2" height="5" fill="#555"/><rect x="607" y="8" width="5" height="2" fill="#3a3a3a"/><rect x="633" y="21" width="3" height="2" fill="#3a3a3a"/><rect x="644" y="22" width="4" height="2" fill="#3a3a3a"/><rect x="671" y="18" width="3" height="2" fill="#3a3a3a"/><rect x="683" y="17" width="2" height="2" fill="#3a3a3a"/><rect x="700" y="9" width="2" height="2" fill="#3a3a3a"/><rect x="661" y="1" width="2" height="5" fill="#555"/><rect x="869" y="1" width="2" height="5" fill="#555"/><rect x="301" y="0" width="2" height="28" fill="#1a1a1a"/><rect x="597" y="0" width="2" height="28" fill="#1a1a1a"/></svg>
<svg style="left:294px;top:158px" width="1123" height="531"><path d="M24.5 0 V531" stroke="rgba(255,255,255,0.045)" stroke-width="1"/><path d="M53.5 0 V531" stroke="rgba(255,255,255,0.045)" stroke-width="1"/><path d="M83.5 0 V531" stroke="rgba(255,255,255,0.045)" stroke-width="1"/><path d="M113.5 0 V531" stroke="rgba(255,255,255,0.045)" stroke-width="1"/><path d="M143.5 0 V531" stroke="rgba(255,255,255,0.135)" stroke-width="1"/><path d="M173.5 0 V531" stroke="rgba(255,255,255,0.045)" stroke-width="1"/><path d="M203.5 0 V531" stroke="rgba(255,255,255,0.045)" stroke-width="1"/><path d="M233.5 0 V531" stroke="rgba(255,255,255,0.045)" stroke-width="1"/><path d="M262.5 0 V531" stroke="rgba(255,255,255,0.045)" stroke-width="1"/><path d="M292.5 0 V531" stroke="rgba(255,255,255,0.045)" stroke-width="1"/><path d="M322.5 0 V531" stroke="rgba(255,255,255,0.045)" stroke-width="1"/><path d="M352.5 0 V531" stroke="rgba(255,255,255,0.045)" stroke-width="1"/><path d="M382.5 0 V531" stroke="rgba(255,255,255,0.045)" stroke-width="1"/><path d="M412.5 0 V531" stroke="rgba(255,255,255,0.045)" stroke-width="1"/><path d="M442.5 0 V531" stroke="rgba(255,255,255,0.135)" stroke-width="1"/><path d="M472.5 0 V531" stroke="rgba(255,255,255,0.045)" stroke-width="1"/><path d="M501.5 0 V531" stroke="rgba(255,255,255,0.045)" stroke-width="1"/><path d="M531.5 0 V531" stroke="rgba(255,255,255,0.045)" stroke-width="1"/><path d="M561.5 0 V531" stroke="rgba(255,255,255,0.045)" stroke-width="1"/><path d="M591.5 0 V531" stroke="rgba(255,255,255,0.045)" stroke-width="1"/><path d="M621.5 0 V531" stroke="rgba(255,255,255,0.045)" stroke-width="1"/><path d="M651.5 0 V531" stroke="rgba(255,255,255,0.045)" stroke-width="1"/><path d="M681.5 0 V531" stroke="rgba(255,255,255,0.045)" stroke-width="1"/><path d="M710.5 0 V531" stroke="rgba(255,255,255,0.045)" stroke-width="1"/><path d="M740.5 0 V531" stroke="rgba(255,255,255,0.135)" stroke-width="1"/><path d="M770.5 0 V531" stroke="rgba(255,255,255,0.045)" stroke-width="1"/><path d="M800.5 0 V531" stroke="rgba(255,255,255,0.045)" stroke-width="1"/><path d="M830.5 0 V531" stroke="rgba(255,255,255,0.045)" stroke-width="1"/><path d="M860.5 0 V531" stroke="rgba(255,255,255,0.045)" stroke-width="1"/><path d="M890.5 0 V531" stroke="rgba(255,255,255,0.045)" stroke-width="1"/><path d="M920.5 0 V531" stroke="rgba(255,255,255,0.045)" stroke-width="1"/><path d="M949.5 0 V531" stroke="rgba(255,255,255,0.045)" stroke-width="1"/><path d="M979.5 0 V531" stroke="rgba(255,255,255,0.045)" stroke-width="1"/><path d="M1009.5 0 V531" stroke="rgba(255,255,255,0.045)" stroke-width="1"/><path d="M1039.5 0 V531" stroke="rgba(255,255,255,0.135)" stroke-width="1"/><path d="M1069.5 0 V531" stroke="rgba(255,255,255,0.045)" stroke-width="1"/><path d="M1099.5 0 V531" stroke="rgba(255,255,255,0.045)" stroke-width="1"/><path d="M0 19.5 H1123" stroke="rgba(255,255,255,0.045)" stroke-width="1"/><path d="M0 49.5 H1123" stroke="rgba(255,255,255,0.045)" stroke-width="1"/><path d="M0 79.5 H1123" stroke="rgba(255,255,255,0.045)" stroke-width="1"/><path d="M0 109.5 H1123" stroke="rgba(255,255,255,0.045)" stroke-width="1"/><path d="M0 139.5 H1123" stroke="rgba(255,255,255,0.045)" stroke-width="1"/><path d="M0 169.5 H1123" stroke="rgba(255,255,255,0.045)" stroke-width="1"/><path d="M0 198.5 H1123" stroke="rgba(255,255,255,0.045)" stroke-width="1"/><path d="M0 228.5 H1123" stroke="rgba(255,255,255,0.045)" stroke-width="1"/><path d="M0 258.5 H1123" stroke="rgba(255,255,255,0.045)" stroke-width="1"/><path d="M0 288.5 H1123" stroke="rgba(255,255,255,0.135)" stroke-width="1"/><path d="M0 318.5 H1123" stroke="rgba(255,255,255,0.045)" stroke-width="1"/><path d="M0 348.5 H1123" stroke="rgba(255,255,255,0.045)" stroke-width="1"/><path d="M0 378.5 H1123" stroke="rgba(255,255,255,0.045)" stroke-width="1"/><path d="M0 407.5 H1123" stroke="rgba(255,255,255,0.045)" stroke-width="1"/><path d="M0 437.5 H1123" stroke="rgba(255,255,255,0.045)" stroke-width="1"/><path d="M0 467.5 H1123" stroke="rgba(255,255,255,0.045)" stroke-width="1"/><path d="M0 497.5 H1123" stroke="rgba(255,255,255,0.045)" stroke-width="1"/><path d="M0 527.5 H1123" stroke="rgba(255,255,255,0.045)" stroke-width="1"/></svg><div class="a" style="left:716px;top:426px;width:41px;height:41px;border-radius:50%;background:rgba(130,130,130,0.28);border:1px solid rgba(150,150,150,0.35)"></div>
<svg style="left:724px;top:436px" width="26" height="20" viewBox="0 0 26 20"><circle cx="6" cy="9" r="4.5" fill="#fff"/><circle cx="12.5" cy="6" r="5" fill="#fff"/><rect x="5" y="9" width="13" height="8" fill="#fff"/><path d="M18 11 L24 8 V16 L18 13Z" fill="#fff"/></svg>
<div class="a" style="left:1092px;top:510px;width:10px;height:10px;border-radius:50%;background:radial-gradient(circle at 45% 40%,#ffc8c8 0%,#f07070 50%,#d84848 100%)"></div>
<div class="a" style="left:297px;top:161px;width:48px;height:181px;background:#111111;border-radius:5px"></div>
<div class="a" style="left:313px;top:168px;width:16px;height:1px;background:#8a8a8a;box-shadow:0 3px 0 #8a8a8a"></div>
<div class="a" style="left:301px;top:183px;width:40px;height:25px;background:#4f4f4f;border-radius:4px 4px 0 0"></div>
<div class="a" style="left:301px;top:209px;width:40px;height:25px;background:#4f4f4f;border-radius:0"></div>
<div class="a" style="left:301px;top:235px;width:40px;height:25px;background:#4f4f4f;border-radius:0"></div>
<div class="a" style="left:301px;top:261px;width:40px;height:25px;background:#4f4f4f;border-radius:0"></div>
<div class="a" style="left:301px;top:287px;width:40px;height:25px;background:#3f5f86;border-radius:0"></div>
<div class="a" style="left:301px;top:313px;width:40px;height:25px;background:#4f4f4f;border-radius:0 0 4px 4px"></div>
<svg style="left:311px;top:185px" width="20" height="20" viewBox="0 0 20 20"><path d="M4.5 11.5 L2.2 7.2 Q1.8 6 2.8 5.7 Q3.7 5.4 4.3 6.5 L6 9.5 L5.2 3 Q5 1.8 6 1.7 Q7 1.6 7.2 2.8 L8.2 8.5 L8.6 1.5 Q8.7 0.3 9.7 0.3 Q10.7 0.3 10.7 1.5 L10.9 8.5 L12.4 2.5 Q12.7 1.4 13.6 1.6 Q14.5 1.8 14.3 3 L13.3 9.5 L15.6 5.6 Q16.2 4.6 17 5 Q17.8 5.5 17.3 6.6 L14.5 13.5 Q13 18.5 9.5 18.5 Q6 18.5 4.5 11.5Z" fill="#d2d2d2"/></svg>
<svg style="left:311px;top:211px" width="20" height="20" viewBox="0 0 20 20"><path d="M10 1.5 V7.5 M10 12.5 V18.5 M1.5 10 H7.5 M12.5 10 H18.5" stroke="#c8c8c8" stroke-width="1.3"/><path d="M7.5 4 L10 1.5 L12.5 4 M7.5 16 L10 18.5 L12.5 16 M4 7.5 L1.5 10 L4 12.5 M16 7.5 L18.5 10 L16 12.5" fill="none" stroke="#c8c8c8" stroke-width="1.3"/></svg>
<svg style="left:311px;top:238px" width="20" height="20" viewBox="0 0 20 20"><path d="M8.5 2.6 A7.5 7.5 0 0 0 5 16" fill="none" stroke="#c8c8c8" stroke-width="1.4"/><path d="M11.5 17.4 A7.5 7.5 0 0 0 15 4" fill="none" stroke="#c8c8c8" stroke-width="1.4"/><path d="M2 16.5 H6 V12.5" fill="none" stroke="#c8c8c8" stroke-width="1.4"/><path d="M18 3.5 H14 V7.5" fill="none" stroke="#c8c8c8" stroke-width="1.4"/></svg>
<svg style="left:311px;top:264px" width="20" height="20" viewBox="0 0 20 20"><rect x="2" y="2" width="16" height="16" rx="1" fill="none" stroke="#c8c8c8" stroke-width="1.3"/><rect x="2" y="12" width="6" height="6" fill="none" stroke="#c8c8c8" stroke-width="1.3"/><path d="M9 11 L15 5 M11 5 H15 V9" fill="none" stroke="#c8c8c8" stroke-width="1.3"/></svg>
<svg style="left:311px;top:290px" width="20" height="20" viewBox="0 0 20 20"><path d="M3 6 V14 M17 6 V14 M6 3 H14 M6 17 H14" stroke="#ffffff" stroke-width="1.5"/><rect x="1" y="1" width="4" height="4" fill="#fff"/><rect x="15" y="1" width="4" height="4" fill="#fff"/><rect x="1" y="15" width="4" height="4" fill="#fff"/><rect x="15" y="15" width="4" height="4" fill="#fff"/></svg>
<svg style="left:311px;top:316px" width="20" height="20" viewBox="0 0 20 20"><circle cx="10" cy="10" r="7.5" fill="none" stroke="#c8c8c8" stroke-width="1.3"/><path d="M10 4 V16 M4 10 H16 M8 6 L10 4 L12 6 M8 14 L10 16 L12 14 M6 8 L4 10 L6 12 M14 8 L16 10 L14 12" fill="none" stroke="#c8c8c8" stroke-width="1.3"/><path d="M0 19 L3 19 L0 16Z M20 1 L17 1 L20 4Z" fill="#c8c8c8"/></svg>
<div class="a" style="left:1114px;top:531px;width:176px;height:9px;background:#c9c9c9"></div><div class="a" style="left:1114px;top:535px;width:176px;height:1px;background:#b0b0b0"></div><div class="a" style="left:1114px;top:517px;width:300px;height:169px;background:#111111;border-radius:5px;background:linear-gradient(180deg,rgba(17,17,17,0.86) 0,rgba(17,17,17,0.86) 20px,#111 20px)"></div>
<div class="a" style="left:1120px;top:524px;width:21px;height:1px;background:#a0a0a0;box-shadow:0 4px 0 #a0a0a0"></div>
<div class="t" style="left:1148px;top:516px;font-size:15.5px;color:#b8b8b8">Main Camera</div>
<svg style="left:1119px;top:540px" width="290" height="139"><rect width="290" height="139" fill="#d0d0d0"/><path d="M66.3,15.9 L63.0,16.4 L63.0,19.7 L60.3,17.5 L58.5,18.7 L57.6,16.8 L55.3,16.4 L56.7,14.2 L54.1,12.1 L57.2,11.7 L57.3,8.9 L59.6,10.0 L61.7,8.2 L62.1,11.4 L64.7,11.4 L63.8,13.6Z" fill="none" stroke="#555" stroke-width="0.9" stroke-dasharray="2 1.5"/><path d="M88.4,25.2 L86.8,25.6 L86.6,27.1 L85.2,26.1 L84.0,27.6 L83.6,25.9 L82.2,25.7 L82.8,24.4 L81.3,23.0 L83.3,22.7 L83.2,20.8 L84.9,22.4 L86.1,20.7 L86.5,22.4 L87.7,22.8 L87.0,24.0Z" fill="none" stroke="#555" stroke-width="0.9" stroke-dasharray="2 1.5"/><path d="M31.1,36.2 L29.1,36.7 L29.1,38.9 L27.2,37.6 L25.5,39.7 L25.4,36.7 L23.4,36.8 L24.5,35.1 L23.0,33.6 L25.1,33.3 L24.5,30.1 L26.7,31.8 L28.2,30.9 L28.7,32.7 L30.9,32.8 L29.6,34.6Z" fill="none" stroke="#555" stroke-width="0.9" stroke-dasharray="2 1.5"/><path d="M115.9,35.9 L113.9,36.4 L113.9,38.7 L112.0,37.2 L110.6,38.5 L110.2,36.6 L108.2,36.5 L109.1,34.9 L107.2,33.2 L109.8,33.0 L109.9,31.2 L111.5,32.2 L113.0,30.5 L113.5,32.5 L116.1,32.4 L114.3,34.4Z" fill="none" stroke="#555" stroke-width="0.9" stroke-dasharray="2 1.5"/><path d="M160.9,20.0 L157.5,20.4 L157.4,23.2 L155.1,21.5 L153.0,23.7 L152.4,21.0 L149.7,20.8 L151.1,18.5 L149.2,16.4 L152.3,16.1 L152.0,12.9 L154.4,14.5 L156.3,13.3 L156.9,15.5 L159.8,15.5 L158.6,17.8Z" fill="none" stroke="#555" stroke-width="0.9" stroke-dasharray="2 1.5"/><path d="M179.0,41.2 L176.8,41.3 L177.0,43.5 L175.4,42.2 L174.2,43.1 L173.9,41.6 L172.5,41.4 L172.9,40.2 L171.7,38.9 L173.4,38.5 L173.4,36.6 L175.0,37.8 L176.3,36.4 L176.6,38.3 L177.9,38.5 L177.3,39.8Z" fill="none" stroke="#555" stroke-width="0.9" stroke-dasharray="2 1.5"/><g transform="translate(13,75) scale(0.36)"><path d="M23 14 H33 V16 H34 V21 H29 V22 H33 V24 H27 V27 H30 V29 H27 V33 H25 V36 H23 V40 H22 V44 H20 V40 H17 V44 H15 V40 H13 V37 H10 V34 H8 V30 H6 V26 H4 V24 H6 V27 H8 V29 H10 V31 H14 V28 H17 V26 H20 V24 H22 V16 H23Z" fill="#4e4e4e"/><path d="M24 14 L26.5 6 L29 14Z" fill="#28b8e8"/></g><rect x="0" y="109" width="290" height="14" fill="#c4c4c4"/><rect x="0" y="110" width="290" height="1" fill="#888"/><rect x="123" y="106" width="1.5" height="17" fill="#333"/><rect x="261" y="106" width="1.5" height="17" fill="#333"/><rect x="12" y="119" width="1" height="1.5" fill="#555"/><rect x="130" y="118" width="1" height="1.5" fill="#555"/><rect x="279" y="113" width="3" height="1.5" fill="#555"/><rect x="60" y="122" width="2" height="1.5" fill="#555"/><rect x="101" y="112" width="2" height="1.5" fill="#555"/><rect x="72" y="112" width="1" height="1.5" fill="#555"/><rect x="256" y="116" width="3" height="1.5" fill="#555"/><rect x="163" y="113" width="1" height="1.5" fill="#555"/><rect x="271" y="120" width="3" height="1.5" fill="#555"/><rect x="132" y="113" width="3" height="1.5" fill="#555"/><rect x="61" y="120" width="1" height="1.5" fill="#555"/><rect x="176" y="121" width="1" height="1.5" fill="#555"/><rect x="49" y="115" width="1" height="1.5" fill="#555"/><rect x="137" y="119" width="3" height="1.5" fill="#555"/><rect x="211" y="116" width="2" height="1.5" fill="#555"/><rect x="213" y="117" width="3" height="1.5" fill="#555"/><rect x="224" y="113" width="2" height="1.5" fill="#555"/><rect x="266" y="115" width="2" height="1.5" fill="#555"/><rect x="92" y="118" width="3" height="1.5" fill="#555"/><rect x="274" y="122" width="2" height="1.5" fill="#555"/><rect x="89" y="122" width="2" height="1.5" fill="#555"/><rect x="86" y="114" width="1" height="1.5" fill="#555"/><rect x="264" y="119" width="3" height="1.5" fill="#555"/><rect x="274" y="119" width="3" height="1.5" fill="#555"/><rect x="105" y="114" width="2" height="1.5" fill="#555"/><rect x="111" y="114" width="3" height="1.5" fill="#555"/><rect x="273" y="117" width="1" height="1.5" fill="#555"/><rect x="285" y="116" width="3" height="1.5" fill="#555"/><rect x="221" y="121" width="3" height="1.5" fill="#555"/><rect x="146" y="115" width="2" height="1.5" fill="#555"/><rect x="21" y="116" width="2" height="1.5" fill="#555"/><rect x="205" y="115" width="1" height="1.5" fill="#555"/><rect x="194" y="115" width="2" height="1.5" fill="#555"/><rect x="257" y="114" width="2" height="1.5" fill="#555"/><rect x="255" y="121" width="1" height="1.5" fill="#555"/><rect x="249" y="121" width="3" height="1.5" fill="#555"/><rect x="24" y="119" width="3" height="1.5" fill="#555"/><rect x="47" y="118" width="3" height="1.5" fill="#555"/><rect x="33" y="119" width="1" height="1.5" fill="#555"/><rect x="130" y="122" width="3" height="1.5" fill="#555"/></svg>
<!-- INSPECTOR -->
<div class="a" style="left:1419px;top:101px;width:492px;height:23px;background:#282828;border-radius:4px 4px 0 0"></div>
<div class="a" style="left:1419px;top:124px;width:492px;height:860px;background:#383838"></div>

<!-- inspector -->
<div class="a" style="left:1419px;top:101px;width:96px;height:23px;background:#3c3c3c;border-radius:4px 4px 0 0"></div>
<svg style="left:1431px;top:107px" width="12" height="12"><circle cx="6" cy="6" r="6" fill="#c4c4c4"/><rect x="5" y="5" width="2" height="5" fill="#3c3c3c"/><circle cx="6" cy="3" r="1.1" fill="#3c3c3c"/></svg>
<div class="t" style="left:1449px;top:104px;font-size:15px">检查器</div>
<svg style="left:1866px;top:105px" width="12" height="14"><path d="M4 6.5 V3.8 A2.8 2.8 0 0 1 9.6 3.8 V5" fill="none" stroke="#c4c4c4" stroke-width="1.3"/><rect x="0.7" y="7.2" width="9" height="5.8" fill="none" stroke="#c4c4c4" stroke-width="1.3"/></svg>
<div class="a" style="left:1892px;top:106px;width:3px;height:3px;border-radius:2px;background:#c4c4c4;box-shadow:0 5px 0 #c4c4c4,0 10px 0 #c4c4c4"></div>
<div class="a" style="left:1419px;top:124px;width:492px;height:75px;background:#3c3c3c"></div>
<svg style="left:1427px;top:137px" width="27" height="28" viewBox="0 0 27 28"><path d="M13.5 1.5 L25 7.5 V20.5 L13.5 26.5 L2 20.5 V7.5Z M2 7.5 L13.5 13.5 L25 7.5 M13.5 13.5 V26.5" fill="none" stroke="#c8c8c8" stroke-width="1.6" stroke-linejoin="round"/></svg>
<div class="tri" style="left:1452px;top:165px;border-left-width:4.5px;border-right-width:4.5px;border-top-width:5px"></div>
<div class="a" style="left:1480px;top:139px;width:16px;height:16px;background:#262626;border:1px solid #1c1c1c;border-radius:3px"></div><svg style="left:1483px;top:143px" width="11" height="9"><path d="M1 4.5 L4 7.5 L10 1" fill="none" stroke="#e0e0e0" stroke-width="1.8"/></svg>
<div class="fld" style="left:1504px;top:136px;width:303px;height:23px;border-radius:4px"></div>
<div class="t" style="left:1508px;top:138px;font-size:16px;font-weight:bold;color:#d4d4d4">Main Camera</div>
<div class="a" style="left:1811px;top:139px;width:16px;height:16px;background:#262626;border:1px solid #1c1c1c;border-radius:3px"></div>
<div class="t" style="left:1834px;top:137px;font-size:15px">静态的</div>
<div class="tri" style="left:1891px;top:144px;border-top-color:#c4c4c4"></div>
<div class="t" style="left:1469px;top:167px;font-size:15px">标签</div>
<div class="dd" style="left:1504px;top:167px;width:176px;height:21px"></div><div class="t" style="left:1508px;top:167px;font-size:16px">MainCamera</div><div class="tri" style="left:1663px;top:175px;border-top-color:#c4c4c4"></div>
<div class="t" style="left:1695px;top:167px;font-size:15px">图层</div>
<div class="dd" style="left:1730px;top:167px;width:175px;height:21px"></div><div class="t" style="left:1734px;top:167px;font-size:16px">Default</div><div class="tri" style="left:1888px;top:175px;border-top-color:#c4c4c4"></div>
<div class="a" style="left:1419px;top:199px;width:492px;height:1px;background:#252525"></div>
<div class="a" style="left:1419px;top:200px;width:492px;height:26px;background:#3e3e3e"></div>
<div class="a" style="left:1419px;top:226px;width:492px;height:1px;background:#303030"></div>
<svg style="left:1427px;top:209px" width="11" height="9"><path d="M0 0 H10 L5 8.5Z" fill="#8a8a8a"/></svg>
<svg style="left:1446px;top:205px" width="17" height="16" viewBox="0 0 17 16"><path d="M8.5 8 V1" stroke="#b8e04a" stroke-width="2.2"/><path d="M8.5 8 L2 12" stroke="#4ab8f0" stroke-width="2.2"/><path d="M8.5 8 L15 12" stroke="#f0643c" stroke-width="2.2"/></svg>
<div class="t" style="left:1494px;top:204px;font-size:16px;font-weight:bold;color:#d4d4d4">Transform</div>
<svg style="left:1837px;top:206px" width="14" height="14"><circle cx="7" cy="7" r="6.5" fill="#c4c4c4"/><path d="M4.8 5.2 Q4.8 3 7 3 Q9.2 3 9.2 5 Q9.2 6.3 7.6 7 Q7 7.3 7 8.5" fill="none" stroke="#383838" stroke-width="1.6"/><circle cx="7" cy="10.6" r="1" fill="#383838"/></svg><svg style="left:1863px;top:206px" width="14" height="14"><path d="M1 4 H13 M1 10 H13" stroke="#c4c4c4" stroke-width="1.4"/><rect x="8" y="1" width="2.4" height="6" fill="#c4c4c4"/><rect x="3.5" y="7" width="2.4" height="6" fill="#c4c4c4"/></svg><div class="a" style="left:1893px;top:207px;width:3px;height:3px;border-radius:2px;background:#c4c4c4;box-shadow:0 5px 0 #c4c4c4,0 10px 0 #c4c4c4"></div>
<div class="t" style="left:1443px;top:233px;font-size:15px;">位置</div>
<div class="t" style="left:1617px;top:233px;font-size:16px">X</div>
<div class="fld" style="left:1635px;top:232px;width:73px;height:22px"></div><div class="t" style="left:1639px;top:235px;font-size:16px">0</div>
<div class="t" style="left:1716px;top:233px;font-size:16px">Y</div>
<div class="fld" style="left:1734px;top:232px;width:73px;height:22px"></div><div class="t" style="left:1738px;top:235px;font-size:16px">0</div>
<div class="t" style="left:1814px;top:233px;font-size:16px">Z</div>
<div class="fld" style="left:1832px;top:232px;width:74px;height:22px"></div><div class="t" style="left:1836px;top:235px;font-size:16px">-10</div>
<div class="t" style="left:1443px;top:258px;font-size:15px;">旋转</div>
<div class="t" style="left:1617px;top:258px;font-size:16px">X</div>
<div class="fld" style="left:1635px;top:257px;width:73px;height:22px"></div><div class="t" style="left:1639px;top:260px;font-size:16px">0</div>
<div class="t" style="left:1716px;top:258px;font-size:16px">Y</div>
<div class="fld" style="left:1734px;top:257px;width:73px;height:22px"></div><div class="t" style="left:1738px;top:260px;font-size:16px">0</div>
<div class="t" style="left:1814px;top:258px;font-size:16px">Z</div>
<div class="fld" style="left:1832px;top:257px;width:74px;height:22px"></div><div class="t" style="left:1836px;top:260px;font-size:16px">0</div>
<div class="t" style="left:1443px;top:283px;font-size:15px;">缩放</div>
<div class="t" style="left:1617px;top:283px;font-size:16px">X</div>
<div class="fld" style="left:1635px;top:282px;width:73px;height:22px"></div><div class="t" style="left:1639px;top:285px;font-size:16px">1</div>
<div class="t" style="left:1716px;top:283px;font-size:16px">Y</div>
<div class="fld" style="left:1734px;top:282px;width:73px;height:22px"></div><div class="t" style="left:1738px;top:285px;font-size:16px">1</div>
<div class="t" style="left:1814px;top:283px;font-size:16px">Z</div>
<div class="fld" style="left:1832px;top:282px;width:74px;height:22px"></div><div class="t" style="left:1836px;top:285px;font-size:16px">1</div>
<svg style="left:1589px;top:286px" width="17" height="14" viewBox="0 0 17 14"><path d="M6 3.5 H4 A3.5 3.5 0 0 0 4 10.5 H6 M11 3.5 H13 A3.5 3.5 0 0 1 13 10.5 H11 M5.5 7 H11.5 M3 1 L14 13" fill="none" stroke="#b8b8b8" stroke-width="1.4"/></svg>
<div class="a" style="left:1419px;top:315px;width:492px;height:1px;background:#252525"></div>
<div class="a" style="left:1419px;top:316px;width:492px;height:27px;background:#3e3e3e"></div>
<div class="a" style="left:1419px;top:343px;width:492px;height:1px;background:#303030"></div>
<svg style="left:1427px;top:326px" width="11" height="9"><path d="M0 0 H10 L5 8.5Z" fill="#8a8a8a"/></svg>
<svg style="left:1446px;top:324px" width="17" height="12" viewBox="0 0 17 12"><rect x="0" y="1" width="10" height="10" rx="1" fill="#5ec8f8"/><path d="M11 6 L16.5 1.5 V10.5Z" fill="#5ec8f8"/></svg>
<div class="a" style="left:1469px;top:322px;width:16px;height:16px;background:#262626;border:1px solid #1c1c1c;border-radius:3px"></div><svg style="left:1472px;top:326px" width="11" height="9"><path d="M1 4.5 L4 7.5 L10 1" fill="none" stroke="#e0e0e0" stroke-width="1.8"/></svg>
<div class="t" style="left:1494px;top:321px;font-size:16px;font-weight:bold;color:#d4d4d4">Camera</div>
<svg style="left:1837px;top:323px" width="14" height="14"><circle cx="7" cy="7" r="6.5" fill="#c4c4c4"/><path d="M4.8 5.2 Q4.8 3 7 3 Q9.2 3 9.2 5 Q9.2 6.3 7.6 7 Q7 7.3 7 8.5" fill="none" stroke="#383838" stroke-width="1.6"/><circle cx="7" cy="10.6" r="1" fill="#383838"/></svg><svg style="left:1863px;top:323px" width="14" height="14"><path d="M1 4 H13 M1 10 H13" stroke="#c4c4c4" stroke-width="1.4"/><rect x="8" y="1" width="2.4" height="6" fill="#c4c4c4"/><rect x="3.5" y="7" width="2.4" height="6" fill="#c4c4c4"/></svg><div class="a" style="left:1893px;top:324px;width:3px;height:3px;border-radius:2px;background:#c4c4c4;box-shadow:0 5px 0 #c4c4c4,0 10px 0 #c4c4c4"></div>
<div class="t" style="left:1443px;top:350px;font-size:15px;">清除标志</div>
<div class="dd" style="left:1616px;top:350px;width:289px;height:21px"></div><div class="t" style="left:1620px;top:350px;font-size:15px">天空盒</div><div class="tri" style="left:1888px;top:358px;border-top-color:#c4c4c4"></div>
<div class="t" style="left:1443px;top:375px;font-size:15px;">背景</div>
<div class="a" style="left:1616px;top:374px;width:289px;height:22px;background:#2a2a2a;border-radius:3px"></div>
<div class="a" style="left:1617px;top:375px;width:266px;height:16px;background:#d0d0d0"></div>
<div class="a" style="left:1617px;top:391px;width:266px;height:4px;background:#000"></div>
<svg style="left:1887px;top:377px" width="15" height="15" viewBox="0 0 15 15"><path d="M1.5 13.5 L8 7 M6.5 5.5 L9.5 8.5" stroke="#c4c4c4" stroke-width="1.8"/><path d="M8.5 4.5 L11 2 Q12.5 0.8 13.5 1.8 Q14.5 2.8 13 4.2 L10.5 6.5Z" fill="#c4c4c4"/></svg>
<div class="t" style="left:1443px;top:400px;font-size:15px;">剔除遮罩</div>
<div class="dd" style="left:1616px;top:400px;width:289px;height:21px"></div><div class="t" style="left:1620px;top:400px;font-size:16px">Everything</div><div class="tri" style="left:1888px;top:408px;border-top-color:#c4c4c4"></div>
<div class="t" style="left:1443px;top:435px;font-size:15px;">投影</div>
<div class="dd" style="left:1616px;top:435px;width:289px;height:21px"></div><div class="t" style="left:1620px;top:435px;font-size:15px">正交</div><div class="tri" style="left:1888px;top:443px;border-top-color:#c4c4c4"></div>
<div class="t" style="left:1443px;top:460px;font-size:15px;">大小</div>
<div class="fld" style="left:1616px;top:459px;width:289px;height:22px"></div><div class="t" style="left:1620px;top:462px;font-size:16px">5</div>
<div class="t" style="left:1443px;top:485px;font-size:15px;">剪裁平面</div>
<div class="t" style="left:1617px;top:485px;font-size:15px;">近</div>
<div class="fld" style="left:1662px;top:484px;width:243px;height:22px"></div><div class="t" style="left:1666px;top:487px;font-size:16px">0.3</div>
<div class="t" style="left:1617px;top:510px;font-size:15px;">远</div>
<div class="fld" style="left:1662px;top:509px;width:243px;height:22px"></div><div class="t" style="left:1666px;top:512px;font-size:16px">1000</div>
<div class="t" style="left:1443px;top:535px;font-size:16px;">Viewport <span style="font-size:15px">矩形</span></div>
<div class="t" style="left:1617px;top:535px;font-size:16px">X</div>
<div class="fld" style="left:1635px;top:534px;width:73px;height:22px"></div><div class="t" style="left:1639px;top:537px;font-size:16px">0</div>
<div class="t" style="left:1716px;top:535px;font-size:16px">Y</div>
<div class="fld" style="left:1734px;top:534px;width:73px;height:22px"></div><div class="t" style="left:1738px;top:537px;font-size:16px">0</div>
<div class="t" style="left:1617px;top:560px;font-size:16px">W</div>
<div class="fld" style="left:1635px;top:559px;width:73px;height:22px"></div><div class="t" style="left:1639px;top:562px;font-size:16px">1</div>
<div class="t" style="left:1716px;top:560px;font-size:16px">H</div>
<div class="fld" style="left:1734px;top:559px;width:73px;height:22px"></div><div class="t" style="left:1738px;top:562px;font-size:16px">1</div>
<div class="t" style="left:1443px;top:595px;font-size:15px;">深度</div>
<div class="fld" style="left:1616px;top:594px;width:289px;height:22px"></div><div class="t" style="left:1620px;top:597px;font-size:16px">-1</div>
<div class="t" style="left:1443px;top:620px;font-size:15px;">渲染路径</div>
<div class="dd" style="left:1616px;top:620px;width:289px;height:21px"></div><div class="t" style="left:1620px;top:620px;font-size:15px">使用图形设置</div><div class="tri" style="left:1888px;top:628px;border-top-color:#c4c4c4"></div>
<div class="t" style="left:1443px;top:645px;font-size:15px;">目标纹理</div>
<div class="fld" style="left:1616px;top:645px;width:289px;height:22px"></div>
<div class="t" style="left:1619px;top:645px;font-size:15px">无 (渲染器纹理)</div>
<div class="a" style="left:1882px;top:646px;width:22px;height:20px;background:#2e2e2e;border-radius:0 3px 3px 0"></div>
<svg style="left:1886px;top:649px" width="14" height="14"><circle cx="7" cy="7" r="6" fill="none" stroke="#c4c4c4" stroke-width="1.4"/><circle cx="7" cy="7" r="2.6" fill="#c4c4c4"/></svg>
<div class="t" style="left:1443px;top:670px;font-size:15px;">遮挡剔除</div>
<div class="a" style="left:1616px;top:672px;width:16px;height:16px;background:#262626;border:1px solid #1c1c1c;border-radius:3px"></div><svg style="left:1619px;top:676px" width="11" height="9"><path d="M1 4.5 L4 7.5 L10 1" fill="none" stroke="#e0e0e0" stroke-width="1.8"/></svg>
<div class="t" style="left:1443px;top:695px;font-size:16px;">HDR</div>
<div class="dd" style="left:1616px;top:695px;width:289px;height:21px"></div><div class="t" style="left:1620px;top:695px;font-size:16px">Use Graphics Settings</div><div class="tri" style="left:1888px;top:703px;border-top-color:#c4c4c4"></div>
<div class="t" style="left:1443px;top:720px;font-size:16px;">MSAA</div>
<div class="dd" style="left:1616px;top:720px;width:289px;height:21px"></div><div class="t" style="left:1620px;top:720px;font-size:16px">Use Graphics Settings</div><div class="tri" style="left:1888px;top:728px;border-top-color:#c4c4c4"></div>
<div class="t" style="left:1443px;top:745px;font-size:15px;">允许动态分辨率</div>
<div class="a" style="left:1616px;top:747px;width:16px;height:16px;background:#262626;border:1px solid #1c1c1c;border-radius:3px"></div>
<div class="t" style="left:1443px;top:780px;font-size:15px;">目标显示</div>
<div class="dd" style="left:1616px;top:780px;width:289px;height:21px"></div><div class="t" style="left:1620px;top:780px;font-size:16px">Display 1</div><div class="tri" style="left:1888px;top:788px;border-top-color:#c4c4c4"></div>
<div class="a" style="left:1419px;top:814px;width:492px;height:1px;background:#252525"></div>
<div class="a" style="left:1419px;top:815px;width:492px;height:27px;background:#3e3e3e"></div>
<div class="a" style="left:1419px;top:842px;width:492px;height:1px;background:#303030"></div>
<div class="a" style="left:1419px;top:845px;width:492px;height:1px;background:#262626"></div>
<svg style="left:1446px;top:821px" width="17" height="15" viewBox="0 0 17 15"><path d="M2 13 V8 A6.5 6.5 0 0 1 15 8 V13" fill="none" stroke="#f0b818" stroke-width="2"/><rect x="1" y="9" width="3" height="6" fill="#f0b818"/><rect x="13" y="9" width="3" height="6" fill="#f0b818"/></svg>
<div class="a" style="left:1469px;top:819px;width:16px;height:16px;background:#262626;border:1px solid #1c1c1c;border-radius:3px"></div><svg style="left:1472px;top:823px" width="11" height="9"><path d="M1 4.5 L4 7.5 L10 1" fill="none" stroke="#e0e0e0" stroke-width="1.8"/></svg>
<div class="t" style="left:1494px;top:819px;font-size:16px;font-weight:bold;color:#d4d4d4">Audio Listener</div>
<svg style="left:1837px;top:821px" width="14" height="14"><circle cx="7" cy="7" r="6.5" fill="#c4c4c4"/><path d="M4.8 5.2 Q4.8 3 7 3 Q9.2 3 9.2 5 Q9.2 6.3 7.6 7 Q7 7.3 7 8.5" fill="none" stroke="#383838" stroke-width="1.6"/><circle cx="7" cy="10.6" r="1" fill="#383838"/></svg><svg style="left:1863px;top:821px" width="14" height="14"><path d="M1 4 H13 M1 10 H13" stroke="#c4c4c4" stroke-width="1.4"/><rect x="8" y="1" width="2.4" height="6" fill="#c4c4c4"/><rect x="3.5" y="7" width="2.4" height="6" fill="#c4c4c4"/></svg><div class="a" style="left:1893px;top:822px;width:3px;height:3px;border-radius:2px;background:#c4c4c4;box-shadow:0 5px 0 #c4c4c4,0 10px 0 #c4c4c4"></div>
<div class="a" style="left:1521px;top:856px;width:286px;height:29px;background:#555555;border-radius:3px;border-bottom:1px solid #2a2a2a"></div>
<div class="t" style="left:1634px;top:861px;font-size:15px;color:#d0d0d0">添加组件</div>
<!-- PROJECT -->
<div class="a" style="left:9px;top:691px;width:1408px;height:24px;background:#282828;border-radius:4px 4px 0 0"></div>
<div class="a" style="left:9px;top:715px;width:1408px;height:25px;background:#3c3c3c"></div>
<div class="a" style="left:9px;top:740px;width:1408px;height:244px;background:#333333"></div>

<!-- project -->
<div class="a" style="left:9px;top:691px;width:80px;height:24px;background:#3c3c3c;border-radius:4px 4px 0 0"></div>
<svg style="left:18px;top:698px" width="15" height="12" viewBox="0 0 15 12"><path d="M0 1 Q0 0 1 0 H5.5 L7 2 H14 Q15 2 15 3 V11 Q15 12 14 12 H1 Q0 12 0 11Z" fill="#c4c4c4"/></svg>
<div class="t" style="left:37px;top:694px;font-size:15px">项目</div>
<svg style="left:102px;top:697px" width="13" height="13"><rect x="0.7" y="0.7" width="11.6" height="11.6" fill="none" stroke="#c4c4c4" stroke-width="1.4"/><path d="M3 4 H10 M3 6.5 H10 M3 9 H10" stroke="#c4c4c4" stroke-width="1.3"/></svg>
<div class="t" style="left:120px;top:694px;font-size:15px">控制台</div>
<svg style="left:1373px;top:695px" width="12" height="14"><path d="M4 6.5 V3.8 A2.8 2.8 0 0 1 9.6 3.8 V5" fill="none" stroke="#c4c4c4" stroke-width="1.3"/><rect x="0.7" y="7.2" width="9" height="5.8" fill="none" stroke="#c4c4c4" stroke-width="1.3"/></svg>
<div class="a" style="left:1398px;top:696px;width:3px;height:3px;border-radius:2px;background:#c4c4c4;box-shadow:0 5px 0 #c4c4c4,0 10px 0 #c4c4c4"></div>
<svg style="left:17px;top:720px" width="15" height="15"><path d="M7.5 0.5 V14.5 M0.5 7.5 H14.5" stroke="#c4c4c4" stroke-width="1.6"/></svg>
<div class="tri" style="left:37px;top:725px;border-left-width:4.5px;border-right-width:4.5px;border-top-width:5px"></div>
<div class="fld" style="left:834px;top:718px;width:397px;height:20px;border-radius:5px;border-color:#242424"></div>
<div class="a" style="left:1209px;top:719px;width:21px;height:18px;background:#383838;border-radius:0 4px 4px 0"></div>
<svg style="left:839px;top:722px" width="11" height="11"><circle cx="4.5" cy="4.5" r="3" fill="none" stroke="#b0b0b0" stroke-width="1.4"/><path d="M6.8 6.8 L10 10" stroke="#b0b0b0" stroke-width="1.8"/></svg>
<svg style="left:1213px;top:721px" width="15" height="15"><rect x="4" y="1" width="10" height="10" rx="1" fill="none" stroke="#b0b0b0" stroke-width="1.2"/><rect x="1" y="10" width="4" height="4" fill="none" stroke="#b0b0b0" stroke-width="1.2"/><path d="M6 9 L11 4 M8 4 H11 V7" fill="none" stroke="#b0b0b0" stroke-width="1.2"/></svg>
<div class="a" style="left:1234px;top:715px;width:1px;height:25px;background:#2c2c2c"></div>
<div class="a" style="left:1266px;top:715px;width:1px;height:25px;background:#2c2c2c"></div>
<div class="a" style="left:1299px;top:715px;width:1px;height:25px;background:#2c2c2c"></div>
<div class="a" style="left:1332px;top:715px;width:1px;height:25px;background:#2c2c2c"></div>
<div class="a" style="left:1365px;top:715px;width:1px;height:25px;background:#2c2c2c"></div>
<div class="a" style="left:1416px;top:715px;width:1px;height:25px;background:#2c2c2c"></div>
<svg style="left:1242px;top:718px" width="16" height="17" viewBox="0 0 16 17"><rect x="1" y="1" width="6" height="6" fill="#c4c4c4"/><circle cx="4.5" cy="12" r="4" fill="#c4c4c4"/><path d="M10 4 L15 12 H7.5Z" fill="#c4c4c4"/></svg>
<svg style="left:1274px;top:720px" width="16" height="14" viewBox="0 0 16 14"><path d="M1 8 L8 1 H14 V7 L7 14Z" fill="#c4c4c4"/><circle cx="11" cy="4" r="1.3" fill="#3c3c3c"/></svg>
<svg style="left:1305px;top:718px" width="17" height="17"><circle cx="8.5" cy="8.5" r="8" fill="#c4c4c4"/><rect x="7.3" y="3.5" width="2.4" height="7" fill="#3c3c3c"/><circle cx="8.5" cy="13" r="1.3" fill="#3c3c3c"/></svg>
<svg style="left:1340px;top:720px" width="15" height="14" viewBox="0 0 15 14"><path d="M7.5 0 L9.3 5 H14.5 L10.3 8.2 L12 13.5 L7.5 10.3 L3 13.5 L4.7 8.2 L0.5 5 H5.7Z" fill="#8a8a8a"/></svg>
<svg style="left:1372px;top:719px" width="20" height="16" viewBox="0 0 20 16"><path d="M1 8 Q10 0 19 8 Q10 16 1 8Z" fill="none" stroke="#c4c4c4" stroke-width="1.5"/><circle cx="10" cy="8" r="2.5" fill="#c4c4c4"/><path d="M3 15 L17 1" stroke="#c4c4c4" stroke-width="1.8"/></svg>
<div class="t" style="left:1392px;top:719px;font-size:16px">20</div>
<div class="a" style="left:9px;top:740px;width:242px;height:244px;background:#383838"></div>
<div class="a" style="left:251px;top:740px;width:17px;height:244px;background:#323232;border-left:1px solid #2e2e2e"></div>
<div class="a" style="left:254px;top:761px;width:13px;height:104px;background:#5a5a5a;border-radius:6px"></div>
<svg style="left:255px;top:747px" width="10" height="7"><path d="M0 6 L5 0.5 L10 6Z" fill="#c4c4c4"/></svg>
<svg style="left:255px;top:970px" width="10" height="7"><path d="M0 0.5 L5 6 L10 0.5Z" fill="#c4c4c4"/></svg>
<div class="a" style="left:268px;top:740px;width:1px;height:244px;background:#242424"></div>
<div class="a" style="left:9px;top:840px;width:242px;height:20px;background:#474747"></div>
<svg style="left:14px;top:748px" width="11" height="9"><path d="M0 0 H10 L5 8.5Z" fill="#8a8a8a"/></svg>
<svg style="left:32px;top:744px" width="15" height="14" viewBox="0 0 15 14"><path d="M7.5 0 L9.3 5 H14.5 L10.3 8.2 L12 13.5 L7.5 10.3 L3 13.5 L4.7 8.2 L0.5 5 H5.7Z" fill="#c4c4c4"/></svg>
<div class="t" style="left:53px;top:744px;font-size:16px;font-weight:bold;color:#d0d0d0">Favorites</div>
<svg style="left:48px;top:764px" width="15" height="15"><circle cx="6" cy="6" r="4.6" fill="none" stroke="#b8b8b8" stroke-width="1.5"/><path d="M9.3 9.3 L13 13" stroke="#b8b8b8" stroke-width="2"/></svg>
<div class="t" style="left:69px;top:764px;font-size:16px">All Materials</div>
<svg style="left:48px;top:784px" width="15" height="15"><circle cx="6" cy="6" r="4.6" fill="none" stroke="#b8b8b8" stroke-width="1.5"/><path d="M9.3 9.3 L13 13" stroke="#b8b8b8" stroke-width="2"/></svg>
<div class="t" style="left:69px;top:784px;font-size:16px">All Models</div>
<svg style="left:48px;top:804px" width="15" height="15"><circle cx="6" cy="6" r="4.6" fill="none" stroke="#b8b8b8" stroke-width="1.5"/><path d="M9.3 9.3 L13 13" stroke="#b8b8b8" stroke-width="2"/></svg>
<div class="t" style="left:69px;top:804px;font-size:16px">All Prefabs</div>
<svg style="left:15px;top:845px" width="9" height="11"><path d="M0 0 L8.5 5.5 L0 11Z" fill="#8a8a8a"/></svg>
<svg style="left:31px;top:844px" width="15" height="12" viewBox="0 0 15 12"><path d="M0 1 Q0 0 1 0 H5.5 L7 2 H14 Q15 2 15 3 V11 Q15 12 14 12 H1 Q0 12 0 11Z" fill="#c4c4c4"/></svg>
<div class="t" style="left:53px;top:842px;font-size:16px;font-weight:bold;color:#d0d0d0">Assets</div>
<svg style="left:14px;top:866px" width="11" height="9"><path d="M0 0 H10 L5 8.5Z" fill="#8a8a8a"/></svg>
<svg style="left:31px;top:864px" width="17" height="12" viewBox="0 0 17 12"><path d="M0 1 Q0 0 1 0 H5.5 L7 2 H14 Q15 2 15 3 V4 H3.5 L0 11Z" fill="#c4c4c4"/><path d="M3.5 5 H17 L13.5 12 H0Z" fill="#c4c4c4"/></svg>
<div class="t" style="left:53px;top:862px;font-size:16px;font-weight:bold;color:#d0d0d0">Packages</div>
<svg style="left:33px;top:885px" width="9" height="11"><path d="M0 0 L8.5 5.5 L0 11Z" fill="#8a8a8a"/></svg>
<svg style="left:48px;top:884px" width="15" height="12" viewBox="0 0 15 12"><path d="M0 1 Q0 0 1 0 H5.5 L7 2 H14 Q15 2 15 3 V11 Q15 12 14 12 H1 Q0 12 0 11Z" fill="#c4c4c4"/></svg>
<div class="t" style="left:69px;top:882px;font-size:16px">2D Animation</div>
<svg style="left:33px;top:905px" width="9" height="11"><path d="M0 0 L8.5 5.5 L0 11Z" fill="#8a8a8a"/></svg>
<svg style="left:48px;top:904px" width="15" height="12" viewBox="0 0 15 12"><path d="M0 1 Q0 0 1 0 H5.5 L7 2 H14 Q15 2 15 3 V11 Q15 12 14 12 H1 Q0 12 0 11Z" fill="#c4c4c4"/></svg>
<div class="t" style="left:69px;top:902px;font-size:16px">2D Common</div>
<svg style="left:33px;top:925px" width="9" height="11"><path d="M0 0 L8.5 5.5 L0 11Z" fill="#8a8a8a"/></svg>
<svg style="left:48px;top:924px" width="15" height="12" viewBox="0 0 15 12"><path d="M0 1 Q0 0 1 0 H5.5 L7 2 H14 Q15 2 15 3 V11 Q15 12 14 12 H1 Q0 12 0 11Z" fill="#c4c4c4"/></svg>
<div class="t" style="left:69px;top:922px;font-size:16px">2D Pixel Perfect</div>
<svg style="left:33px;top:945px" width="9" height="11"><path d="M0 0 L8.5 5.5 L0 11Z" fill="#8a8a8a"/></svg>
<svg style="left:48px;top:944px" width="15" height="12" viewBox="0 0 15 12"><path d="M0 1 Q0 0 1 0 H5.5 L7 2 H14 Q15 2 15 3 V11 Q15 12 14 12 H1 Q0 12 0 11Z" fill="#c4c4c4"/></svg>
<div class="t" style="left:69px;top:942px;font-size:16px">2D PSD Importer</div>
<svg style="left:33px;top:965px" width="9" height="11"><path d="M0 0 L8.5 5.5 L0 11Z" fill="#8a8a8a"/></svg>
<svg style="left:48px;top:964px" width="15" height="12" viewBox="0 0 15 12"><path d="M0 1 Q0 0 1 0 H5.5 L7 2 H14 Q15 2 15 3 V11 Q15 12 14 12 H1 Q0 12 0 11Z" fill="#c4c4c4"/></svg>
<div class="t" style="left:69px;top:962px;font-size:16px">2D Sprite</div>
<div class="a" style="left:269px;top:740px;width:1148px;height:27px;background:#3e3e3e"></div>
<div class="t" style="left:274px;top:744px;font-size:16px;font-weight:bold;color:#d0d0d0">Assets</div>
<div class="a" style="left:269px;top:959px;width:1148px;height:25px;background:#3e3e3e"></div>
<div class="a" style="left:1328px;top:969px;width:69px;height:3px;background:#5a5a5a"></div>
<div class="a" style="left:1362px;top:964px;width:12px;height:13px;border-radius:50%;background:#a8a8a8"></div>
<svg style="left:298px;top:795px" width="60" height="50" viewBox="0 0 60 50"><path d="M0 4 Q0 0 4 0 H25 L30 10 H56 Q60 10 60 14 V46 Q60 50 56 50 H4 Q0 50 0 46Z" fill="#c2c2c2"/></svg>
<div class="t" style="left:278px;top:860px;width:100px;text-align:center;font-size:14px;color:#c8c8c8">Animations</div>
<svg style="left:393px;top:795px" width="60" height="50" viewBox="0 0 60 50"><path d="M0 4 Q0 0 4 0 H25 L30 10 H56 Q60 10 60 14 V46 Q60 50 56 50 H4 Q0 50 0 46Z" fill="#c2c2c2"/></svg>
<div class="t" style="left:373px;top:860px;width:100px;text-align:center;font-size:14px;color:#c8c8c8">Scenes</div>
<svg style="left:488px;top:795px" width="60" height="50" viewBox="0 0 60 50"><path d="M0 4 Q0 0 4 0 H25 L30 10 H56 Q60 10 60 14 V46 Q60 50 56 50 H4 Q0 50 0 46Z" fill="#c2c2c2"/></svg>
<div class="t" style="left:468px;top:860px;width:100px;text-align:center;font-size:14px;color:#c8c8c8">Scropts</div>
<svg style="left:583px;top:795px" width="60" height="50" viewBox="0 0 60 50"><path d="M0 4 Q0 0 4 0 H25 L30 10 H56 Q60 10 60 14 V46 Q60 50 56 50 H4 Q0 50 0 46Z" fill="#c2c2c2"/></svg>
<div class="t" style="left:563px;top:860px;width:100px;text-align:center;font-size:14px;color:#c8c8c8">TextMesh ...</div>
<div class="a" style="left:670px;top:783px;width:75px;height:75px;background:#4b4b4b"></div>
<svg style="left:689px;top:789px" width="37" height="62" viewBox="0 0 37 62"><rect width="37" height="62" fill="#d4d4d4"/><path d="M14.5 10 Q18.5 7 22.5 10 V60 H14.5Z" fill="#4e4e4e"/><path d="M4.5 22 Q7 19.5 9.5 22 V36 Q9.5 38 12 38 H14.5 V44 H11 Q4.5 44 4.5 38Z" fill="#4e4e4e"/><path d="M26.5 21 Q29 18.5 31.5 21 V37 Q31.5 43 25 43 H22.5 V37 H25 Q26.5 37 26.5 35Z" fill="#4e4e4e"/><rect x="0" y="59" width="37" height="1" fill="#9a9a9a"/></svg>
<div class="t" style="left:657px;top:860px;width:100px;text-align:center;font-size:14px;color:#c8c8c8">cactus</div>
<svg style="left:764px;top:793px" width="78" height="55" viewBox="0 0 78 55"><rect width="78" height="55" fill="#d6d6d6"/><rect width="78" height="1" fill="#aaa"/><circle cx="24" cy="9" r="2.5" fill="none" stroke="#666" stroke-width="0.8" stroke-dasharray="1.5 1"/><circle cx="44" cy="19" r="1.8" fill="none" stroke="#666" stroke-width="0.8" stroke-dasharray="1.5 1"/><circle cx="71" cy="8" r="2.5" fill="none" stroke="#666" stroke-width="0.8" stroke-dasharray="1.5 1"/><g transform="translate(2,23) scale(0.3)"><path d="M23 14 H33 V16 H34 V21 H29 V22 H33 V24 H27 V27 H30 V29 H27 V33 H25 V36 H23 V40 H22 V44 H20 V40 H17 V44 H15 V40 H13 V37 H10 V34 H8 V30 H6 V26 H4 V24 H6 V27 H8 V29 H10 V31 H14 V28 H17 V26 H20 V24 H22 V16 H23Z" fill="#4e4e4e"/><path d="M24 14 L26.5 6 L29 14Z" fill="#28b8e8"/></g><rect x="2" y="46" width="74" height="1" fill="#bbb"/><rect x="10" y="48" width="2" height="1" fill="#666"/><rect x="25" y="49" width="3" height="1" fill="#666"/><rect x="40" y="48" width="2" height="1" fill="#666"/><rect x="55" y="49" width="3" height="1" fill="#666"/><rect x="70" y="44" width="1" height="5" fill="#555"/><rect x="0" y="44" width="78" height="1" fill="#aaa"/><rect x="60" y="52" width="16" height="2" fill="#e04040"/></svg>
<div class="a" style="left:832px;top:807px;width:24px;height:24px;border-radius:50%;background:#d8d8d8;border:1px solid #9a9a9a"></div>
<svg style="left:840px;top:813px" width="10" height="12"><path d="M0 0 L9 6 L0 12Z" fill="#3c3c3c"/></svg>
<div class="t" style="left:753px;top:860px;width:100px;text-align:center;font-size:14px;color:#c8c8c8">kong</div>
<div class="a" style="left:861px;top:784px;width:74px;height:74px;background-color:#fff;background-image:linear-gradient(45deg,#e8e8e8 25%,transparent 25%,transparent 75%,#e8e8e8 75%),linear-gradient(45deg,#e8e8e8 25%,transparent 25%,transparent 75%,#e8e8e8 75%);background-size:8px 8px;background-position:0 0,4px 4px"></div>
<svg style="left:861px;top:784px" width="74" height="74" viewBox="0 0 74 74"><path d="M35 18 Q34 8 44 7 Q52 7 54 13 L66 16 Q71 18 68 22 L62 23 L60 26 Q54 26 50 24 Q48 30 50 38 Q52 48 48 54 L46 60 L48 64 Q42 66 40 62 L36 62 L34 66 Q28 66 28 60 Q24 56 22 48 Q16 50 11 46 Q18 44 22 38 Q28 30 35 18Z" fill="#5f9148" stroke="#2b3a26" stroke-width="1.2" stroke-linejoin="round"/><path d="M41 30 Q46 40 42 56" fill="none" stroke="#9cc46a" stroke-width="3"/><path d="M54 18 L64 19" stroke="#f0f0e0" stroke-width="2"/><circle cx="46" cy="12" r="1.3" fill="#1a1a1a"/><circle cx="50" cy="12" r="1.3" fill="#1a1a1a"/></svg>
<div class="t" style="left:848px;top:860px;width:100px;text-align:center;font-size:14px;color:#c8c8c8">R-C (1)</div>
<!-- taskbar -->
<div class="a" style="left:0;top:1020px;width:1920px;height:60px;background:#cee5ec"></div>
<!-- status bar icons -->
<div class="a" style="left:1779px;top:986px;width:1px;height:22px;background:#2a2a2a"></div>
<div class="a" style="left:1812px;top:986px;width:1px;height:22px;background:#2a2a2a"></div>
<div class="a" style="left:1844px;top:986px;width:1px;height:22px;background:#2a2a2a"></div>
<div class="a" style="left:1877px;top:986px;width:1px;height:22px;background:#2a2a2a"></div>
<svg style="left:1786px;top:988px" width="18" height="18" viewBox="0 0 18 18"><ellipse cx="9" cy="10.5" rx="5" ry="6" fill="#c4c4c4"/><circle cx="9" cy="4" r="2.6" fill="#c4c4c4"/><path d="M1 7 L4 9 M1 12 H4 M1 17 L4 14 M17 7 L14 9 M17 12 H14 M17 17 L14 14" stroke="#c4c4c4" stroke-width="1.4"/><path d="M2 1 L17 17" stroke="#191919" stroke-width="2.5"/><path d="M2 1 L17 17" stroke="#c4c4c4" stroke-width="1.3"/></svg>
<svg style="left:1819px;top:989px" width="18" height="17" viewBox="0 0 18 17"><ellipse cx="9" cy="3.5" rx="7" ry="3" fill="#c4c4c4"/><path d="M2 6 Q9 10 16 6 V9 Q9 13 2 9Z M2 11 Q9 15 16 11 V14 Q9 18 2 14Z" fill="#c4c4c4"/><path d="M3 1 L17 16" stroke="#191919" stroke-width="2.5"/><path d="M3 1 L17 16" stroke="#c4c4c4" stroke-width="1.3"/></svg>
<svg style="left:1851px;top:989px" width="18" height="17" viewBox="0 0 18 17"><path d="M3 5 A7 7 0 0 1 15 5 M15 12 A7 7 0 0 1 3 12" fill="none" stroke="#c4c4c4" stroke-width="1.5"/><circle cx="9" cy="8.5" r="3" fill="none" stroke="#c4c4c4" stroke-width="1.5"/><path d="M2 1 L16 16" stroke="#c4c4c4" stroke-width="1.3"/></svg>
<svg style="left:1884px;top:989px" width="18" height="18"><circle cx="9" cy="9" r="8" fill="none" stroke="#c4c4c4" stroke-width="1.4"/><path d="M5.5 9 L8 11.5 L12.5 6.5" fill="none" stroke="#c4c4c4" stroke-width="1.5"/></svg>
<!-- taskbar content -->
<svg style="left:24px;top:1034px" width="36" height="30" viewBox="0 0 36 30"><circle cx="23" cy="10" r="7" fill="#f6a623"/><path d="M6 27 Q0 27 1 21 Q2 16 8 16 Q10 9 17 9 Q24 9 26 15 Q33 15 33 21 Q33 27 27 27Z" fill="#dbe8f8" stroke="#a9c4e8" stroke-width="1"/></svg>
<div class="t" style="left:64px;top:1030px;font-size:14px;color:#1a1a1a">23°C</div>
<div class="t" style="left:64px;top:1049px;font-size:14px;color:#333">多云</div>
<svg style="left:530px;top:1036px" width="30" height="30" viewBox="0 0 30 30"><defs><linearGradient id="wg" x1="0" y1="0" x2="1" y2="1"><stop offset="0" stop-color="#45c6f8"/><stop offset="1" stop-color="#0a70d8"/></linearGradient></defs><rect x="0" y="0" width="14.2" height="14.2" rx="1.5" fill="url(#wg)"/><rect x="15.8" y="0" width="14.2" height="14.2" rx="1.5" fill="url(#wg)"/><rect x="0" y="15.8" width="14.2" height="14.2" rx="1.5" fill="url(#wg)"/><rect x="15.8" y="15.8" width="14.2" height="14.2" rx="1.5" fill="url(#wg)"/></svg>
<div class="a" style="left:577px;top:1031px;width:273px;height:39px;border-radius:20px;background:#eef6f8;border:1px solid #c6d8de"></div>
<svg style="left:590px;top:1040px" width="20" height="20"><circle cx="8" cy="8" r="6.3" fill="none" stroke="#1a1a1a" stroke-width="2"/><path d="M12.5 12.5 L18 18" stroke="#1a1a1a" stroke-width="2.2"/></svg>
<div class="t" style="left:621px;top:1040px;font-size:18px;color:#555">搜索</div>
<svg style="left:790px;top:1035px" width="52" height="30" viewBox="0 0 52 30"><path d="M0 22 H52 V29 H0Z" fill="#4a5a78"/><rect x="18" y="18" width="16" height="5" fill="#2f3d58"/><rect x="20" y="3" width="2" height="16" fill="#c8b070"/><rect x="30" y="3" width="2" height="16" fill="#c8b070"/><circle cx="44" cy="14" r="7" fill="#d8ccaa"/><circle cx="7" cy="15" r="4" fill="#d8ccaa"/><path d="M5 18 L14 15 L18 21 H4Z" fill="#2f3d58"/></svg>
<svg style="left:866px;top:1036px" width="30" height="29" viewBox="0 0 30 29"><rect x="10" y="0" width="19" height="19" rx="2" fill="#f8f8f8" stroke="#d0d0d0"/><rect x="0" y="9" width="19" height="19" rx="2" fill="#2a2a2a"/><rect x="10" y="9" width="9" height="10" fill="#9a9a9a"/></svg>
<svg style="left:921px;top:1037px" width="32" height="27" viewBox="0 0 32 27"><path d="M0 2 Q0 0 2 0 H11 L14 3 H30 Q32 3 32 5 V25 Q32 27 30 27 H2 Q0 27 0 25Z" fill="#f2b820"/><path d="M0 8 H32 V25 Q32 27 30 27 H2 Q0 27 0 25Z" fill="#fcd24a"/><rect x="8" y="19" width="16" height="8" rx="1.5" fill="#1a6fd0"/><rect x="11" y="22" width="10" height="2" fill="#9ccaf8"/></svg>
<svg style="left:976px;top:1035px" width="31" height="31" viewBox="0 0 31 31"><defs><linearGradient id="eg" x1="0" y1="0" x2="1" y2="1"><stop offset="0" stop-color="#3bd37a"/><stop offset="0.5" stop-color="#1ba0e2"/><stop offset="1" stop-color="#0c59a4"/></linearGradient></defs><circle cx="15.5" cy="15.5" r="15" fill="url(#eg)"/><path d="M8 17 Q8 10 16 10 Q23 10 23 15 Q23 18 19 18 H12 Q13 24 20 24 Q24 24 27 22 Q24 30 15 30 Q6 29 5 20Z" fill="#e8f4fc"/><path d="M10 17 Q11 12 16 12 Q21 12 21 16 H10Z" fill="#0d6fc6"/></svg>
<div class="a" style="left:985px;top:1070px;width:12px;height:4px;border-radius:2px;background:#707880"></div>
<svg style="left:1031px;top:1035px" width="30" height="31" viewBox="0 0 30 31"><path d="M9 6 V3 Q9 1 11 1 H19 Q21 1 21 3 V6" fill="none" stroke="#4ab0f0" stroke-width="2"/><rect x="0" y="5" width="30" height="26" rx="4" fill="#1d4f8f"/><rect x="9" y="12" width="5" height="5" fill="#f35325"/><rect x="15" y="12" width="5" height="5" fill="#81bc06"/><rect x="9" y="18" width="5" height="5" fill="#05a6f0"/><rect x="15" y="18" width="5" height="5" fill="#ffba08"/></svg>
<svg style="left:1086px;top:1035px" width="30" height="30" viewBox="0 0 30 30"><defs><linearGradient id="dg" x1="0" y1="0" x2="1" y2="0"><stop offset="0" stop-color="#ff3ca0"/><stop offset="0.5" stop-color="#ff1a1a"/><stop offset="1" stop-color="#ff9a00"/></linearGradient></defs><path d="M15 0 L30 15 L15 30 L0 15Z" fill="url(#dg)"/></svg>
<svg style="left:1141px;top:1035px" width="31" height="30" viewBox="0 0 31 30"><path d="M5 2 Q5 0 7 0 H22 L18 18 H3 Q1 18 1.5 16Z" fill="#4cc9f0"/><path d="M9 12 H28 Q30 12 29.5 14 L26 30 H7 Z" fill="#4f6ef7"/><path d="M9 12 H18 L17 18 H7.5Z" fill="#38a6f2"/></svg>
<svg style="left:1196px;top:1035px" width="30" height="30" viewBox="0 0 30 30"><rect width="30" height="30" rx="6" fill="#3c8cf8"/><path d="M4 6 Q12 10 15 18 L26 7 L22 14 L27 15 L19 19 Q16 26 12 25 Q14 20 12 16 Q8 10 4 6Z" fill="#fff"/></svg>
<svg style="left:1251px;top:1035px" width="30" height="30" viewBox="0 0 30 30"><circle cx="18" cy="12" r="9" fill="none" stroke="#f57c00" stroke-width="3.5"/><path d="M11 19 L3 27" stroke="#f57c00" stroke-width="4.5" stroke-linecap="round"/></svg>
<svg style="left:1306px;top:1035px" width="28" height="30" viewBox="0 0 28 30"><path d="M14 0 L27 7.5 V22.5 L14 30 L1 22.5 V7.5Z" fill="#f0f0f0" stroke="#bdbdbd"/><path d="M14 6 L21 10 V19 L14 23 L7 19 V10Z M14 14 V23 M14 14 L7 10 M14 14 L21 10" fill="#3a3a3a" stroke="#f0f0f0" stroke-width="2"/></svg>
<div class="a" style="left:1313px;top:1070px;width:12px;height:4px;border-radius:2px;background:#707880"></div>
<div class="a" style="left:1352px;top:1026px;width:48px;height:48px;border-radius:5px;background:#e6f1f5;border:1px solid #d0e0e6"></div>
<svg style="left:1361px;top:1035px" width="28" height="30" viewBox="0 0 28 30"><path d="M14 0 L27 7.5 V22.5 L14 30 L1 22.5 V7.5Z" fill="#3a3a3a"/><path d="M14 5 L22 9.5 V20 L14 24.5 L6 20 V9.5Z" fill="#e8e8e8"/><path d="M14 9 L18.5 11.5 V17.5 L14 20 L9.5 17.5 V11.5Z M14 14.5 V20 M14 14.5 L9.5 11.5 M14 14.5 L18.5 11.5" fill="#3a3a3a" stroke="#e8e8e8" stroke-width="1.6"/></svg>
<div class="a" style="left:1366px;top:1071px;width:20px;height:3px;border-radius:2px;background:#1a6fd0"></div>
<svg style="left:1579px;top:1045px" width="15" height="9"><path d="M1 8 L7.5 1.5 L14 8" fill="none" stroke="#1a1a1a" stroke-width="1.5"/></svg>
<svg style="left:1617px;top:1040px" width="18" height="20" viewBox="0 0 18 20"><ellipse cx="9" cy="12" rx="7" ry="7.5" fill="#1a1a1a"/><ellipse cx="9" cy="13.5" rx="4.5" ry="5.5" fill="#fff"/><circle cx="9" cy="5.5" r="5" fill="#1a1a1a"/><ellipse cx="9" cy="8" rx="3" ry="1.5" fill="#f0b000"/><rect x="3" y="10" width="12" height="2.5" rx="1" fill="#e02020"/><path d="M4 19 H8 M10 19 H14" stroke="#f0a000" stroke-width="1.5"/></svg>
<div class="t" style="left:1656px;top:1039px;font-size:18px;color:#1a1a1a">英</div>
<svg style="left:1696px;top:1041px" width="20" height="16" viewBox="0 0 20 16"><path d="M1 5.5 Q10 -2.5 19 5.5 M4 8.5 Q10 3.5 16 8.5 M7 11.5 Q10 9 13 11.5" fill="none" stroke="#1a1a1a" stroke-width="1.5"/><circle cx="10" cy="14.3" r="1.4" fill="#1a1a1a"/></svg>
<svg style="left:1725px;top:1041px" width="22" height="17" viewBox="0 0 22 17"><path d="M1 5.5 H4.5 L9.5 1 V16 L4.5 11.5 H1Z" fill="none" stroke="#1a1a1a" stroke-width="1.4"/><path d="M12.5 5.5 Q14 8.5 12.5 11.5 M15 3.5 Q18 8.5 15 13.5 M17.5 1.5 Q22 8.5 17.5 15.5" fill="none" stroke="#1a1a1a" stroke-width="1.4"/></svg>
<svg style="left:1755px;top:1040px" width="22" height="17" viewBox="0 0 22 17"><rect x="1" y="5" width="17" height="11" rx="2" fill="none" stroke="#1a1a1a" stroke-width="1.4"/><rect x="3" y="7" width="13" height="7" fill="#1a1a1a"/><rect x="18.5" y="8.5" width="2" height="4" fill="#1a1a1a"/><path d="M5 1 L3 6 H7 L5 10" fill="none" stroke="#1a1a1a" stroke-width="1.2"/></svg>
<div class="t" style="left:1765px;top:1030px;width:100px;text-align:right;font-size:14px;color:#1a1a1a">0:02</div>
<div class="t" style="left:1765px;top:1050px;width:100px;text-align:right;font-size:15px;color:#1a1a1a">2023/6/24</div>
<svg style="left:1876px;top:1040px" width="19" height="20" viewBox="0 0 19 20"><path d="M3 14 V9 Q3 3 9 3 Q15 3 15 9 V14 L17 16 H1Z" fill="#1a1a1a"/><path d="M7 17.5 Q9 20 11 17.5" fill="#1a1a1a"/><text x="6" y="12" font-size="7" font-family="Liberation Sans" font-weight="bold" fill="#d3e6ec">z</text><text x="12" y="5" font-size="6" font-family="Liberation Sans" font-weight="bold" fill="#1a1a1a">z</text></svg>
</body></html>
